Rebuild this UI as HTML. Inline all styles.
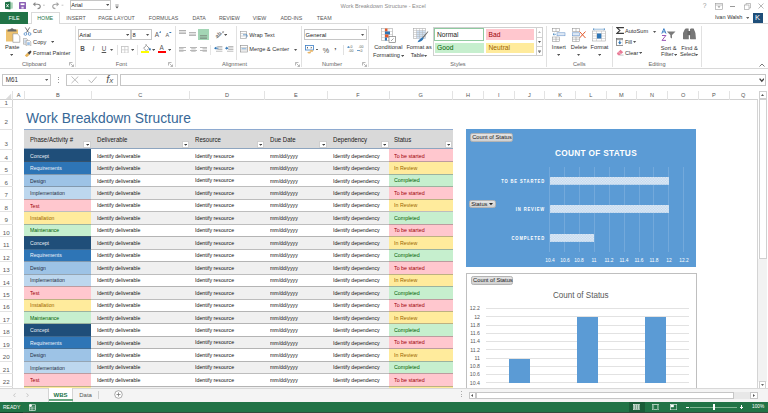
<!DOCTYPE html>
<html><head><meta charset="utf-8"><style>
html,body{margin:0;padding:0;width:768px;height:413px;overflow:hidden;background:#fff;}
body{position:relative;font-family:"Liberation Sans", sans-serif;}
.t{position:absolute;white-space:nowrap;}
.b{position:absolute;box-sizing:border-box;}
</style></head><body>
<div class="b" style="left:0px;top:90.6px;width:757.50px;height:9.70px;background:#fff;border-bottom:1px solid #d2d2d2;"></div><div class="b" style="left:12.1px;top:90.6px;width:1.00px;height:9.20px;background:#e3e3e3;"></div><div class="t" style="left:-181.5px;width:400px;text-align:center;top:91.66px;height:7.28px;line-height:7.28px;font-size:5.6px;color:#555;font-weight:400;">A</div><div class="b" style="left:24.1px;top:90.6px;width:1.00px;height:9.20px;background:#e3e3e3;"></div><div class="t" style="left:-142.1px;width:400px;text-align:center;top:91.66px;height:7.28px;line-height:7.28px;font-size:5.6px;color:#555;font-weight:400;">B</div><div class="b" style="left:90.89999999999999px;top:90.6px;width:1.00px;height:9.20px;background:#e3e3e3;"></div><div class="t" style="left:-59.650000000000006px;width:400px;text-align:center;top:91.66px;height:7.28px;line-height:7.28px;font-size:5.6px;color:#555;font-weight:400;">C</div><div class="b" style="left:189.0px;top:90.6px;width:1.00px;height:9.20px;background:#e3e3e3;"></div><div class="t" style="left:26.94999999999999px;width:400px;text-align:center;top:91.66px;height:7.28px;line-height:7.28px;font-size:5.6px;color:#555;font-weight:400;">D</div><div class="b" style="left:264.1px;top:90.6px;width:1.00px;height:9.20px;background:#e3e3e3;"></div><div class="t" style="left:95.85000000000002px;width:400px;text-align:center;top:91.66px;height:7.28px;line-height:7.28px;font-size:5.6px;color:#555;font-weight:400;">E</div><div class="b" style="left:326.8px;top:90.6px;width:1.00px;height:9.20px;background:#e3e3e3;"></div><div class="t" style="left:158.04999999999995px;width:400px;text-align:center;top:91.66px;height:7.28px;line-height:7.28px;font-size:5.6px;color:#555;font-weight:400;">F</div><div class="b" style="left:388.5px;top:90.6px;width:1.00px;height:9.20px;background:#e3e3e3;"></div><div class="t" style="left:220.75px;width:400px;text-align:center;top:91.66px;height:7.28px;line-height:7.28px;font-size:5.6px;color:#555;font-weight:400;">G</div><div class="b" style="left:452.20000000000005px;top:90.6px;width:1.00px;height:9.20px;background:#e3e3e3;"></div><div class="t" style="left:268.05px;width:400px;text-align:center;top:91.66px;height:7.28px;line-height:7.28px;font-size:5.6px;color:#555;font-weight:400;">H</div><div class="b" style="left:483.1px;top:90.6px;width:1.00px;height:9.20px;background:#e3e3e3;"></div><div class="t" style="left:298.85px;width:400px;text-align:center;top:91.66px;height:7.28px;line-height:7.28px;font-size:5.6px;color:#555;font-weight:400;">I</div><div class="b" style="left:513.8000000000001px;top:90.6px;width:1.00px;height:9.20px;background:#e3e3e3;"></div><div class="t" style="left:329.45000000000005px;width:400px;text-align:center;top:91.66px;height:7.28px;line-height:7.28px;font-size:5.6px;color:#555;font-weight:400;">J</div><div class="b" style="left:544.3000000000001px;top:90.6px;width:1.00px;height:9.20px;background:#e3e3e3;"></div><div class="t" style="left:360.04999999999995px;width:400px;text-align:center;top:91.66px;height:7.28px;line-height:7.28px;font-size:5.6px;color:#555;font-weight:400;">K</div><div class="b" style="left:575.0px;top:90.6px;width:1.00px;height:9.20px;background:#e3e3e3;"></div><div class="t" style="left:390.75px;width:400px;text-align:center;top:91.66px;height:7.28px;line-height:7.28px;font-size:5.6px;color:#555;font-weight:400;">L</div><div class="b" style="left:605.7px;top:90.6px;width:1.00px;height:9.20px;background:#e3e3e3;"></div><div class="t" style="left:421.29999999999995px;width:400px;text-align:center;top:91.66px;height:7.28px;line-height:7.28px;font-size:5.6px;color:#555;font-weight:400;">M</div><div class="b" style="left:636.1px;top:90.6px;width:1.00px;height:9.20px;background:#e3e3e3;"></div><div class="t" style="left:452.04999999999995px;width:400px;text-align:center;top:91.66px;height:7.28px;line-height:7.28px;font-size:5.6px;color:#555;font-weight:400;">N</div><div class="b" style="left:667.2px;top:90.6px;width:1.00px;height:9.20px;background:#e3e3e3;"></div><div class="t" style="left:483.1px;width:400px;text-align:center;top:91.66px;height:7.28px;line-height:7.28px;font-size:5.6px;color:#555;font-weight:400;">O</div><div class="b" style="left:698.2px;top:90.6px;width:1.00px;height:9.20px;background:#e3e3e3;"></div><div class="t" style="left:513.75px;width:400px;text-align:center;top:91.66px;height:7.28px;line-height:7.28px;font-size:5.6px;color:#555;font-weight:400;">P</div><div class="b" style="left:728.5px;top:90.6px;width:1.00px;height:9.20px;background:#e3e3e3;"></div><div class="t" style="left:543.2px;width:400px;text-align:center;top:91.66px;height:7.28px;line-height:7.28px;font-size:5.6px;color:#555;font-weight:400;">Q</div><svg class="b" style="left:2px;top:91px;" width="10" height="9" viewBox="0 0 10 9"><path d="M9.2 2.6 L9.2 8.2 L3.6 8.2 Z" fill="#dcdcdc"/></svg><div class="b" style="left:12.1px;top:99.8px;width:0.90px;height:288.20px;background:#d4d4d4;"></div><div class="b" style="left:0px;top:106.5px;width:12.50px;height:1.00px;background:#e3e3e3;"></div><div class="t" style="left:-193.8px;width:400px;text-align:center;top:99.27px;height:8.06px;line-height:8.06px;font-size:6.2px;color:#5a5a5a;font-weight:400;">1</div><div class="b" style="left:0px;top:128.8px;width:12.50px;height:1.00px;background:#e3e3e3;"></div><div class="t" style="left:-193.8px;width:400px;text-align:center;top:118.07px;height:8.06px;line-height:8.06px;font-size:6.2px;color:#5a5a5a;font-weight:400;">2</div><div class="b" style="left:0px;top:148.7px;width:12.50px;height:1.00px;background:#e3e3e3;"></div><div class="t" style="left:-193.8px;width:400px;text-align:center;top:140.37px;height:8.06px;line-height:8.06px;font-size:6.2px;color:#5a5a5a;font-weight:400;">3</div><div class="b" style="left:0px;top:161px;width:12.50px;height:1.00px;background:#e3e3e3;"></div><div class="t" style="left:-193.8px;width:400px;text-align:center;top:153.93px;height:8.06px;line-height:8.06px;font-size:6.2px;color:#5a5a5a;font-weight:400;">4</div><div class="b" style="left:0px;top:174px;width:12.50px;height:1.00px;background:#e3e3e3;"></div><div class="t" style="left:-193.8px;width:400px;text-align:center;top:166.39px;height:8.06px;line-height:8.06px;font-size:6.2px;color:#5a5a5a;font-weight:400;">5</div><div class="b" style="left:0px;top:186px;width:12.50px;height:1.00px;background:#e3e3e3;"></div><div class="t" style="left:-193.8px;width:400px;text-align:center;top:178.85px;height:8.06px;line-height:8.06px;font-size:6.2px;color:#5a5a5a;font-weight:400;">6</div><div class="b" style="left:0px;top:199px;width:12.50px;height:1.00px;background:#e3e3e3;"></div><div class="t" style="left:-193.8px;width:400px;text-align:center;top:191.31px;height:8.06px;line-height:8.06px;font-size:6.2px;color:#5a5a5a;font-weight:400;">7</div><div class="b" style="left:0px;top:211px;width:12.50px;height:1.00px;background:#e3e3e3;"></div><div class="t" style="left:-193.8px;width:400px;text-align:center;top:203.77px;height:8.06px;line-height:8.06px;font-size:6.2px;color:#5a5a5a;font-weight:400;">8</div><div class="b" style="left:0px;top:224px;width:12.50px;height:1.00px;background:#e3e3e3;"></div><div class="t" style="left:-193.8px;width:400px;text-align:center;top:216.23px;height:8.06px;line-height:8.06px;font-size:6.2px;color:#5a5a5a;font-weight:400;">9</div><div class="b" style="left:0px;top:236px;width:12.50px;height:1.00px;background:#e3e3e3;"></div><div class="t" style="left:-193.8px;width:400px;text-align:center;top:228.69px;height:8.06px;line-height:8.06px;font-size:6.2px;color:#5a5a5a;font-weight:400;">10</div><div class="b" style="left:0px;top:249px;width:12.50px;height:1.00px;background:#e3e3e3;"></div><div class="t" style="left:-193.8px;width:400px;text-align:center;top:241.15px;height:8.06px;line-height:8.06px;font-size:6.2px;color:#5a5a5a;font-weight:400;">11</div><div class="b" style="left:0px;top:261px;width:12.50px;height:1.00px;background:#e3e3e3;"></div><div class="t" style="left:-193.8px;width:400px;text-align:center;top:253.61px;height:8.06px;line-height:8.06px;font-size:6.2px;color:#5a5a5a;font-weight:400;">12</div><div class="b" style="left:0px;top:274px;width:12.50px;height:1.00px;background:#e3e3e3;"></div><div class="t" style="left:-193.8px;width:400px;text-align:center;top:266.07px;height:8.06px;line-height:8.06px;font-size:6.2px;color:#5a5a5a;font-weight:400;">13</div><div class="b" style="left:0px;top:286px;width:12.50px;height:1.00px;background:#e3e3e3;"></div><div class="t" style="left:-193.8px;width:400px;text-align:center;top:278.53px;height:8.06px;line-height:8.06px;font-size:6.2px;color:#5a5a5a;font-weight:400;">14</div><div class="b" style="left:0px;top:299px;width:12.50px;height:1.00px;background:#e3e3e3;"></div><div class="t" style="left:-193.8px;width:400px;text-align:center;top:290.99px;height:8.06px;line-height:8.06px;font-size:6.2px;color:#5a5a5a;font-weight:400;">15</div><div class="b" style="left:0px;top:311px;width:12.50px;height:1.00px;background:#e3e3e3;"></div><div class="t" style="left:-193.8px;width:400px;text-align:center;top:303.45px;height:8.06px;line-height:8.06px;font-size:6.2px;color:#5a5a5a;font-weight:400;">16</div><div class="b" style="left:0px;top:323px;width:12.50px;height:1.00px;background:#e3e3e3;"></div><div class="t" style="left:-193.8px;width:400px;text-align:center;top:315.91px;height:8.06px;line-height:8.06px;font-size:6.2px;color:#5a5a5a;font-weight:400;">17</div><div class="b" style="left:0px;top:336px;width:12.50px;height:1.00px;background:#e3e3e3;"></div><div class="t" style="left:-193.8px;width:400px;text-align:center;top:328.37px;height:8.06px;line-height:8.06px;font-size:6.2px;color:#5a5a5a;font-weight:400;">18</div><div class="b" style="left:0px;top:348px;width:12.50px;height:1.00px;background:#e3e3e3;"></div><div class="t" style="left:-193.8px;width:400px;text-align:center;top:340.83px;height:8.06px;line-height:8.06px;font-size:6.2px;color:#5a5a5a;font-weight:400;">19</div><div class="b" style="left:0px;top:361px;width:12.50px;height:1.00px;background:#e3e3e3;"></div><div class="t" style="left:-193.8px;width:400px;text-align:center;top:353.29px;height:8.06px;line-height:8.06px;font-size:6.2px;color:#5a5a5a;font-weight:400;">20</div><div class="b" style="left:0px;top:373px;width:12.50px;height:1.00px;background:#e3e3e3;"></div><div class="t" style="left:-193.8px;width:400px;text-align:center;top:365.75px;height:8.06px;line-height:8.06px;font-size:6.2px;color:#5a5a5a;font-weight:400;">21</div><div class="b" style="left:0px;top:386px;width:12.50px;height:1.00px;background:#e3e3e3;"></div><div class="t" style="left:-193.8px;width:400px;text-align:center;top:378.21px;height:8.06px;line-height:8.06px;font-size:6.2px;color:#5a5a5a;font-weight:400;">22</div><div class="b" style="left:756.9px;top:99.8px;width:1.00px;height:288.20px;background:#d4d4d4;"></div><div class="t" style="left:26.4px;top:108.94px;height:18.53px;line-height:18.53px;font-size:14.25px;color:#376897;font-weight:400;transform:scaleX(0.97);transform-origin:0 0;">Work Breakdown Structure</div><div class="b" style="left:24.2px;top:129.0px;width:428.40px;height:20.40px;background:#d9d9d9;border-top:1.4px solid #8eaad0;border-bottom:0.9px solid #8ea5bf;"></div><div class="t" style="left:29.8px;top:135.84px;height:8.32px;line-height:8.32px;font-size:6.4px;color:#1a1a1a;font-weight:400;transform:scaleX(0.95);transform-origin:0 50%;">Phase/Activity #</div><div class="b" style="left:83.39999999999999px;top:140.6px;width:7.50px;height:7.90px;background:#fff;border:0.6px solid #cfcfcf;"></div><svg class="b" style="left:85.64999999999999px;top:143.9px;" width="3.2" height="1.8" viewBox="0 0 3.2 1.8"><path d="M0 0 L3.2 0 L1.6 1.8 Z" fill="#444"/></svg><div class="t" style="left:96.6px;top:135.84px;height:8.32px;line-height:8.32px;font-size:6.4px;color:#1a1a1a;font-weight:400;transform:scaleX(0.95);transform-origin:0 50%;">Deliverable</div><div class="b" style="left:181.5px;top:140.6px;width:7.50px;height:7.90px;background:#fff;border:0.6px solid #cfcfcf;"></div><svg class="b" style="left:183.75px;top:143.9px;" width="3.2" height="1.8" viewBox="0 0 3.2 1.8"><path d="M0 0 L3.2 0 L1.6 1.8 Z" fill="#444"/></svg><div class="t" style="left:194.70000000000002px;top:135.84px;height:8.32px;line-height:8.32px;font-size:6.4px;color:#1a1a1a;font-weight:400;transform:scaleX(0.95);transform-origin:0 50%;">Resource</div><div class="b" style="left:256.6px;top:140.6px;width:7.50px;height:7.90px;background:#fff;border:0.6px solid #cfcfcf;"></div><svg class="b" style="left:258.85px;top:143.9px;" width="3.2" height="1.8" viewBox="0 0 3.2 1.8"><path d="M0 0 L3.2 0 L1.6 1.8 Z" fill="#444"/></svg><div class="t" style="left:269.8px;top:135.84px;height:8.32px;line-height:8.32px;font-size:6.4px;color:#1a1a1a;font-weight:400;transform:scaleX(0.95);transform-origin:0 50%;">Due Date</div><div class="b" style="left:319.3px;top:140.6px;width:7.50px;height:7.90px;background:#fff;border:0.6px solid #cfcfcf;"></div><svg class="b" style="left:321.55px;top:143.9px;" width="3.2" height="1.8" viewBox="0 0 3.2 1.8"><path d="M0 0 L3.2 0 L1.6 1.8 Z" fill="#444"/></svg><div class="t" style="left:332.5px;top:135.84px;height:8.32px;line-height:8.32px;font-size:6.4px;color:#1a1a1a;font-weight:400;transform:scaleX(0.95);transform-origin:0 50%;">Dependency</div><div class="b" style="left:381.0px;top:140.6px;width:7.50px;height:7.90px;background:#fff;border:0.6px solid #cfcfcf;"></div><svg class="b" style="left:383.25px;top:143.9px;" width="3.2" height="1.8" viewBox="0 0 3.2 1.8"><path d="M0 0 L3.2 0 L1.6 1.8 Z" fill="#444"/></svg><div class="t" style="left:394.2px;top:135.84px;height:8.32px;line-height:8.32px;font-size:6.4px;color:#1a1a1a;font-weight:400;transform:scaleX(0.95);transform-origin:0 50%;">Status</div><div class="b" style="left:444.70000000000005px;top:140.6px;width:7.50px;height:7.90px;background:#fff;border:0.6px solid #cfcfcf;"></div><svg class="b" style="left:446.95000000000005px;top:143.9px;" width="3.2" height="1.8" viewBox="0 0 3.2 1.8"><path d="M0 0 L3.2 0 L1.6 1.8 Z" fill="#444"/></svg><div class="b" style="left:91.3px;top:149.2px;width:297.60px;height:12.46px;background:#fff;"></div><div class="b" style="left:24.2px;top:149.2px;width:67.10px;height:12.46px;background:#1f4e79;"></div><div class="b" style="left:388.9px;top:149.2px;width:63.70px;height:12.46px;background:#ffc7ce;"></div><div class="t" style="left:29.9px;top:152.68px;height:7.29px;line-height:7.29px;font-size:5.61px;color:#e8eef5;font-weight:400;transform:scaleX(0.9091);transform-origin:0 50%;">Concept</div><div class="t" style="left:97.1px;top:152.61px;height:7.44px;line-height:7.44px;font-size:5.720000000000001px;color:#111;font-weight:400;transform:scaleX(0.9091);transform-origin:0 50%;">Identify deliverable</div><div class="t" style="left:194.9px;top:152.54px;height:7.58px;line-height:7.58px;font-size:5.83px;color:#111;font-weight:400;transform:scaleX(0.9091);transform-origin:0 50%;">Identify resource</div><div class="t" style="left:269.8px;top:152.61px;height:7.44px;line-height:7.44px;font-size:5.720000000000001px;color:#111;font-weight:400;transform:scaleX(0.9091);transform-origin:0 50%;">mm/dd/yyyy</div><div class="t" style="left:333.1px;top:152.60px;height:7.46px;line-height:7.46px;font-size:5.742px;color:#111;font-weight:400;transform:scaleX(0.9091);transform-origin:0 50%;">Identify dependency</div><div class="t" style="left:394.4px;top:152.54px;height:7.58px;line-height:7.58px;font-size:5.83px;color:#9c0006;font-weight:400;transform:scaleX(0.9091);transform-origin:0 50%;">To be started</div><div class="b" style="left:91.3px;top:161.66px;width:297.60px;height:12.46px;background:#f0f0f0;"></div><div class="b" style="left:24.2px;top:161.66px;width:67.10px;height:12.46px;background:#2e75b6;"></div><div class="b" style="left:388.9px;top:161.66px;width:63.70px;height:12.46px;background:#ffeb9c;"></div><div class="t" style="left:29.9px;top:165.14px;height:7.29px;line-height:7.29px;font-size:5.61px;color:#eef4fa;font-weight:400;transform:scaleX(0.9091);transform-origin:0 50%;">Requirements</div><div class="t" style="left:97.1px;top:165.07px;height:7.44px;line-height:7.44px;font-size:5.720000000000001px;color:#111;font-weight:400;transform:scaleX(0.9091);transform-origin:0 50%;">Identify deliverable</div><div class="t" style="left:194.9px;top:165.00px;height:7.58px;line-height:7.58px;font-size:5.83px;color:#111;font-weight:400;transform:scaleX(0.9091);transform-origin:0 50%;">Identify resource</div><div class="t" style="left:269.8px;top:165.07px;height:7.44px;line-height:7.44px;font-size:5.720000000000001px;color:#111;font-weight:400;transform:scaleX(0.9091);transform-origin:0 50%;">mm/dd/yyyy</div><div class="t" style="left:333.1px;top:165.06px;height:7.46px;line-height:7.46px;font-size:5.742px;color:#111;font-weight:400;transform:scaleX(0.9091);transform-origin:0 50%;">Identify dependency</div><div class="t" style="left:394.4px;top:165.00px;height:7.58px;line-height:7.58px;font-size:5.83px;color:#9c6500;font-weight:400;transform:scaleX(0.9091);transform-origin:0 50%;">In Review</div><div class="b" style="left:91.3px;top:174.12px;width:297.60px;height:12.46px;background:#fff;"></div><div class="b" style="left:24.2px;top:174.12px;width:67.10px;height:12.46px;background:#9dc3e6;"></div><div class="b" style="left:388.9px;top:174.12px;width:63.70px;height:12.46px;background:#c6efce;"></div><div class="t" style="left:29.9px;top:177.60px;height:7.29px;line-height:7.29px;font-size:5.61px;color:#1f2f3f;font-weight:400;transform:scaleX(0.9091);transform-origin:0 50%;">Design</div><div class="t" style="left:97.1px;top:177.53px;height:7.44px;line-height:7.44px;font-size:5.720000000000001px;color:#111;font-weight:400;transform:scaleX(0.9091);transform-origin:0 50%;">Identify deliverable</div><div class="t" style="left:194.9px;top:177.46px;height:7.58px;line-height:7.58px;font-size:5.83px;color:#111;font-weight:400;transform:scaleX(0.9091);transform-origin:0 50%;">Identify resource</div><div class="t" style="left:269.8px;top:177.53px;height:7.44px;line-height:7.44px;font-size:5.720000000000001px;color:#111;font-weight:400;transform:scaleX(0.9091);transform-origin:0 50%;">mm/dd/yyyy</div><div class="t" style="left:333.1px;top:177.52px;height:7.46px;line-height:7.46px;font-size:5.742px;color:#111;font-weight:400;transform:scaleX(0.9091);transform-origin:0 50%;">Identify dependency</div><div class="t" style="left:394.4px;top:177.46px;height:7.58px;line-height:7.58px;font-size:5.83px;color:#006100;font-weight:400;transform:scaleX(0.9091);transform-origin:0 50%;">Completed</div><div class="b" style="left:91.3px;top:186.57999999999998px;width:297.60px;height:12.46px;background:#f0f0f0;"></div><div class="b" style="left:24.2px;top:186.57999999999998px;width:67.10px;height:12.46px;background:#bdd7ee;"></div><div class="b" style="left:388.9px;top:186.57999999999998px;width:63.70px;height:12.46px;background:#ffc7ce;"></div><div class="t" style="left:29.9px;top:190.06px;height:7.29px;line-height:7.29px;font-size:5.61px;color:#1f2f3f;font-weight:400;transform:scaleX(0.9091);transform-origin:0 50%;">Implementation</div><div class="t" style="left:97.1px;top:189.99px;height:7.44px;line-height:7.44px;font-size:5.720000000000001px;color:#111;font-weight:400;transform:scaleX(0.9091);transform-origin:0 50%;">Identify deliverable</div><div class="t" style="left:194.9px;top:189.92px;height:7.58px;line-height:7.58px;font-size:5.83px;color:#111;font-weight:400;transform:scaleX(0.9091);transform-origin:0 50%;">Identify resource</div><div class="t" style="left:269.8px;top:189.99px;height:7.44px;line-height:7.44px;font-size:5.720000000000001px;color:#111;font-weight:400;transform:scaleX(0.9091);transform-origin:0 50%;">mm/dd/yyyy</div><div class="t" style="left:333.1px;top:189.98px;height:7.46px;line-height:7.46px;font-size:5.742px;color:#111;font-weight:400;transform:scaleX(0.9091);transform-origin:0 50%;">Identify dependency</div><div class="t" style="left:394.4px;top:189.92px;height:7.58px;line-height:7.58px;font-size:5.83px;color:#9c0006;font-weight:400;transform:scaleX(0.9091);transform-origin:0 50%;">To be started</div><div class="b" style="left:91.3px;top:199.04px;width:297.60px;height:12.46px;background:#fff;"></div><div class="b" style="left:24.2px;top:199.04px;width:67.10px;height:12.46px;background:#ffc7ce;"></div><div class="b" style="left:388.9px;top:199.04px;width:63.70px;height:12.46px;background:#ffeb9c;"></div><div class="t" style="left:29.9px;top:202.52px;height:7.29px;line-height:7.29px;font-size:5.61px;color:#9c0006;font-weight:400;transform:scaleX(0.9091);transform-origin:0 50%;">Test</div><div class="t" style="left:97.1px;top:202.45px;height:7.44px;line-height:7.44px;font-size:5.720000000000001px;color:#111;font-weight:400;transform:scaleX(0.9091);transform-origin:0 50%;">Identify deliverable</div><div class="t" style="left:194.9px;top:202.38px;height:7.58px;line-height:7.58px;font-size:5.83px;color:#111;font-weight:400;transform:scaleX(0.9091);transform-origin:0 50%;">Identify resource</div><div class="t" style="left:269.8px;top:202.45px;height:7.44px;line-height:7.44px;font-size:5.720000000000001px;color:#111;font-weight:400;transform:scaleX(0.9091);transform-origin:0 50%;">mm/dd/yyyy</div><div class="t" style="left:333.1px;top:202.44px;height:7.46px;line-height:7.46px;font-size:5.742px;color:#111;font-weight:400;transform:scaleX(0.9091);transform-origin:0 50%;">Identify dependency</div><div class="t" style="left:394.4px;top:202.38px;height:7.58px;line-height:7.58px;font-size:5.83px;color:#9c6500;font-weight:400;transform:scaleX(0.9091);transform-origin:0 50%;">In Review</div><div class="b" style="left:91.3px;top:211.5px;width:297.60px;height:12.46px;background:#f0f0f0;"></div><div class="b" style="left:24.2px;top:211.5px;width:67.10px;height:12.46px;background:#ffeb9c;"></div><div class="b" style="left:388.9px;top:211.5px;width:63.70px;height:12.46px;background:#c6efce;"></div><div class="t" style="left:29.9px;top:214.98px;height:7.29px;line-height:7.29px;font-size:5.61px;color:#9c6500;font-weight:400;transform:scaleX(0.9091);transform-origin:0 50%;">Installation</div><div class="t" style="left:97.1px;top:214.91px;height:7.44px;line-height:7.44px;font-size:5.720000000000001px;color:#111;font-weight:400;transform:scaleX(0.9091);transform-origin:0 50%;">Identify deliverable</div><div class="t" style="left:194.9px;top:214.84px;height:7.58px;line-height:7.58px;font-size:5.83px;color:#111;font-weight:400;transform:scaleX(0.9091);transform-origin:0 50%;">Identify resource</div><div class="t" style="left:269.8px;top:214.91px;height:7.44px;line-height:7.44px;font-size:5.720000000000001px;color:#111;font-weight:400;transform:scaleX(0.9091);transform-origin:0 50%;">mm/dd/yyyy</div><div class="t" style="left:333.1px;top:214.90px;height:7.46px;line-height:7.46px;font-size:5.742px;color:#111;font-weight:400;transform:scaleX(0.9091);transform-origin:0 50%;">Identify dependency</div><div class="t" style="left:394.4px;top:214.84px;height:7.58px;line-height:7.58px;font-size:5.83px;color:#006100;font-weight:400;transform:scaleX(0.9091);transform-origin:0 50%;">Completed</div><div class="b" style="left:91.3px;top:223.95999999999998px;width:297.60px;height:12.46px;background:#fff;"></div><div class="b" style="left:24.2px;top:223.95999999999998px;width:67.10px;height:12.46px;background:#c6efce;"></div><div class="b" style="left:388.9px;top:223.95999999999998px;width:63.70px;height:12.46px;background:#ffc7ce;"></div><div class="t" style="left:29.9px;top:227.44px;height:7.29px;line-height:7.29px;font-size:5.61px;color:#006100;font-weight:400;transform:scaleX(0.9091);transform-origin:0 50%;">Maintenance</div><div class="t" style="left:97.1px;top:227.37px;height:7.44px;line-height:7.44px;font-size:5.720000000000001px;color:#111;font-weight:400;transform:scaleX(0.9091);transform-origin:0 50%;">Identify deliverable</div><div class="t" style="left:194.9px;top:227.30px;height:7.58px;line-height:7.58px;font-size:5.83px;color:#111;font-weight:400;transform:scaleX(0.9091);transform-origin:0 50%;">Identify resource</div><div class="t" style="left:269.8px;top:227.37px;height:7.44px;line-height:7.44px;font-size:5.720000000000001px;color:#111;font-weight:400;transform:scaleX(0.9091);transform-origin:0 50%;">mm/dd/yyyy</div><div class="t" style="left:333.1px;top:227.36px;height:7.46px;line-height:7.46px;font-size:5.742px;color:#111;font-weight:400;transform:scaleX(0.9091);transform-origin:0 50%;">Identify dependency</div><div class="t" style="left:394.4px;top:227.30px;height:7.58px;line-height:7.58px;font-size:5.83px;color:#9c0006;font-weight:400;transform:scaleX(0.9091);transform-origin:0 50%;">To be started</div><div class="b" style="left:91.3px;top:236.42px;width:297.60px;height:12.46px;background:#f0f0f0;"></div><div class="b" style="left:24.2px;top:236.42px;width:67.10px;height:12.46px;background:#1f4e79;"></div><div class="b" style="left:388.9px;top:236.42px;width:63.70px;height:12.46px;background:#ffeb9c;"></div><div class="t" style="left:29.9px;top:239.90px;height:7.29px;line-height:7.29px;font-size:5.61px;color:#e8eef5;font-weight:400;transform:scaleX(0.9091);transform-origin:0 50%;">Concept</div><div class="t" style="left:97.1px;top:239.83px;height:7.44px;line-height:7.44px;font-size:5.720000000000001px;color:#111;font-weight:400;transform:scaleX(0.9091);transform-origin:0 50%;">Identify deliverable</div><div class="t" style="left:194.9px;top:239.76px;height:7.58px;line-height:7.58px;font-size:5.83px;color:#111;font-weight:400;transform:scaleX(0.9091);transform-origin:0 50%;">Identify resource</div><div class="t" style="left:269.8px;top:239.83px;height:7.44px;line-height:7.44px;font-size:5.720000000000001px;color:#111;font-weight:400;transform:scaleX(0.9091);transform-origin:0 50%;">mm/dd/yyyy</div><div class="t" style="left:333.1px;top:239.82px;height:7.46px;line-height:7.46px;font-size:5.742px;color:#111;font-weight:400;transform:scaleX(0.9091);transform-origin:0 50%;">Identify dependency</div><div class="t" style="left:394.4px;top:239.76px;height:7.58px;line-height:7.58px;font-size:5.83px;color:#9c6500;font-weight:400;transform:scaleX(0.9091);transform-origin:0 50%;">In Review</div><div class="b" style="left:91.3px;top:248.88px;width:297.60px;height:12.46px;background:#fff;"></div><div class="b" style="left:24.2px;top:248.88px;width:67.10px;height:12.46px;background:#2e75b6;"></div><div class="b" style="left:388.9px;top:248.88px;width:63.70px;height:12.46px;background:#c6efce;"></div><div class="t" style="left:29.9px;top:252.36px;height:7.29px;line-height:7.29px;font-size:5.61px;color:#eef4fa;font-weight:400;transform:scaleX(0.9091);transform-origin:0 50%;">Requirements</div><div class="t" style="left:97.1px;top:252.29px;height:7.44px;line-height:7.44px;font-size:5.720000000000001px;color:#111;font-weight:400;transform:scaleX(0.9091);transform-origin:0 50%;">Identify deliverable</div><div class="t" style="left:194.9px;top:252.22px;height:7.58px;line-height:7.58px;font-size:5.83px;color:#111;font-weight:400;transform:scaleX(0.9091);transform-origin:0 50%;">Identify resource</div><div class="t" style="left:269.8px;top:252.29px;height:7.44px;line-height:7.44px;font-size:5.720000000000001px;color:#111;font-weight:400;transform:scaleX(0.9091);transform-origin:0 50%;">mm/dd/yyyy</div><div class="t" style="left:333.1px;top:252.28px;height:7.46px;line-height:7.46px;font-size:5.742px;color:#111;font-weight:400;transform:scaleX(0.9091);transform-origin:0 50%;">Identify dependency</div><div class="t" style="left:394.4px;top:252.22px;height:7.58px;line-height:7.58px;font-size:5.83px;color:#006100;font-weight:400;transform:scaleX(0.9091);transform-origin:0 50%;">Completed</div><div class="b" style="left:91.3px;top:261.34000000000003px;width:297.60px;height:12.46px;background:#f0f0f0;"></div><div class="b" style="left:24.2px;top:261.34000000000003px;width:67.10px;height:12.46px;background:#9dc3e6;"></div><div class="b" style="left:388.9px;top:261.34000000000003px;width:63.70px;height:12.46px;background:#ffc7ce;"></div><div class="t" style="left:29.9px;top:264.82px;height:7.29px;line-height:7.29px;font-size:5.61px;color:#1f2f3f;font-weight:400;transform:scaleX(0.9091);transform-origin:0 50%;">Design</div><div class="t" style="left:97.1px;top:264.75px;height:7.44px;line-height:7.44px;font-size:5.720000000000001px;color:#111;font-weight:400;transform:scaleX(0.9091);transform-origin:0 50%;">Identify deliverable</div><div class="t" style="left:194.9px;top:264.68px;height:7.58px;line-height:7.58px;font-size:5.83px;color:#111;font-weight:400;transform:scaleX(0.9091);transform-origin:0 50%;">Identify resource</div><div class="t" style="left:269.8px;top:264.75px;height:7.44px;line-height:7.44px;font-size:5.720000000000001px;color:#111;font-weight:400;transform:scaleX(0.9091);transform-origin:0 50%;">mm/dd/yyyy</div><div class="t" style="left:333.1px;top:264.74px;height:7.46px;line-height:7.46px;font-size:5.742px;color:#111;font-weight:400;transform:scaleX(0.9091);transform-origin:0 50%;">Identify dependency</div><div class="t" style="left:394.4px;top:264.68px;height:7.58px;line-height:7.58px;font-size:5.83px;color:#9c0006;font-weight:400;transform:scaleX(0.9091);transform-origin:0 50%;">To be started</div><div class="b" style="left:91.3px;top:273.8px;width:297.60px;height:12.46px;background:#fff;"></div><div class="b" style="left:24.2px;top:273.8px;width:67.10px;height:12.46px;background:#bdd7ee;"></div><div class="b" style="left:388.9px;top:273.8px;width:63.70px;height:12.46px;background:#ffeb9c;"></div><div class="t" style="left:29.9px;top:277.28px;height:7.29px;line-height:7.29px;font-size:5.61px;color:#1f2f3f;font-weight:400;transform:scaleX(0.9091);transform-origin:0 50%;">Implementation</div><div class="t" style="left:97.1px;top:277.21px;height:7.44px;line-height:7.44px;font-size:5.720000000000001px;color:#111;font-weight:400;transform:scaleX(0.9091);transform-origin:0 50%;">Identify deliverable</div><div class="t" style="left:194.9px;top:277.14px;height:7.58px;line-height:7.58px;font-size:5.83px;color:#111;font-weight:400;transform:scaleX(0.9091);transform-origin:0 50%;">Identify resource</div><div class="t" style="left:269.8px;top:277.21px;height:7.44px;line-height:7.44px;font-size:5.720000000000001px;color:#111;font-weight:400;transform:scaleX(0.9091);transform-origin:0 50%;">mm/dd/yyyy</div><div class="t" style="left:333.1px;top:277.20px;height:7.46px;line-height:7.46px;font-size:5.742px;color:#111;font-weight:400;transform:scaleX(0.9091);transform-origin:0 50%;">Identify dependency</div><div class="t" style="left:394.4px;top:277.14px;height:7.58px;line-height:7.58px;font-size:5.83px;color:#9c6500;font-weight:400;transform:scaleX(0.9091);transform-origin:0 50%;">In Review</div><div class="b" style="left:91.3px;top:286.26px;width:297.60px;height:12.46px;background:#f0f0f0;"></div><div class="b" style="left:24.2px;top:286.26px;width:67.10px;height:12.46px;background:#ffc7ce;"></div><div class="b" style="left:388.9px;top:286.26px;width:63.70px;height:12.46px;background:#c6efce;"></div><div class="t" style="left:29.9px;top:289.74px;height:7.29px;line-height:7.29px;font-size:5.61px;color:#9c0006;font-weight:400;transform:scaleX(0.9091);transform-origin:0 50%;">Test</div><div class="t" style="left:97.1px;top:289.67px;height:7.44px;line-height:7.44px;font-size:5.720000000000001px;color:#111;font-weight:400;transform:scaleX(0.9091);transform-origin:0 50%;">Identify deliverable</div><div class="t" style="left:194.9px;top:289.60px;height:7.58px;line-height:7.58px;font-size:5.83px;color:#111;font-weight:400;transform:scaleX(0.9091);transform-origin:0 50%;">Identify resource</div><div class="t" style="left:269.8px;top:289.67px;height:7.44px;line-height:7.44px;font-size:5.720000000000001px;color:#111;font-weight:400;transform:scaleX(0.9091);transform-origin:0 50%;">mm/dd/yyyy</div><div class="t" style="left:333.1px;top:289.66px;height:7.46px;line-height:7.46px;font-size:5.742px;color:#111;font-weight:400;transform:scaleX(0.9091);transform-origin:0 50%;">Identify dependency</div><div class="t" style="left:394.4px;top:289.60px;height:7.58px;line-height:7.58px;font-size:5.83px;color:#006100;font-weight:400;transform:scaleX(0.9091);transform-origin:0 50%;">Completed</div><div class="b" style="left:91.3px;top:298.72px;width:297.60px;height:12.46px;background:#fff;"></div><div class="b" style="left:24.2px;top:298.72px;width:67.10px;height:12.46px;background:#ffeb9c;"></div><div class="b" style="left:388.9px;top:298.72px;width:63.70px;height:12.46px;background:#ffc7ce;"></div><div class="t" style="left:29.9px;top:302.20px;height:7.29px;line-height:7.29px;font-size:5.61px;color:#9c6500;font-weight:400;transform:scaleX(0.9091);transform-origin:0 50%;">Installation</div><div class="t" style="left:97.1px;top:302.13px;height:7.44px;line-height:7.44px;font-size:5.720000000000001px;color:#111;font-weight:400;transform:scaleX(0.9091);transform-origin:0 50%;">Identify deliverable</div><div class="t" style="left:194.9px;top:302.06px;height:7.58px;line-height:7.58px;font-size:5.83px;color:#111;font-weight:400;transform:scaleX(0.9091);transform-origin:0 50%;">Identify resource</div><div class="t" style="left:269.8px;top:302.13px;height:7.44px;line-height:7.44px;font-size:5.720000000000001px;color:#111;font-weight:400;transform:scaleX(0.9091);transform-origin:0 50%;">mm/dd/yyyy</div><div class="t" style="left:333.1px;top:302.12px;height:7.46px;line-height:7.46px;font-size:5.742px;color:#111;font-weight:400;transform:scaleX(0.9091);transform-origin:0 50%;">Identify dependency</div><div class="t" style="left:394.4px;top:302.06px;height:7.58px;line-height:7.58px;font-size:5.83px;color:#9c0006;font-weight:400;transform:scaleX(0.9091);transform-origin:0 50%;">To be started</div><div class="b" style="left:91.3px;top:311.18px;width:297.60px;height:12.46px;background:#f0f0f0;"></div><div class="b" style="left:24.2px;top:311.18px;width:67.10px;height:12.46px;background:#c6efce;"></div><div class="b" style="left:388.9px;top:311.18px;width:63.70px;height:12.46px;background:#ffeb9c;"></div><div class="t" style="left:29.9px;top:314.66px;height:7.29px;line-height:7.29px;font-size:5.61px;color:#006100;font-weight:400;transform:scaleX(0.9091);transform-origin:0 50%;">Maintenance</div><div class="t" style="left:97.1px;top:314.59px;height:7.44px;line-height:7.44px;font-size:5.720000000000001px;color:#111;font-weight:400;transform:scaleX(0.9091);transform-origin:0 50%;">Identify deliverable</div><div class="t" style="left:194.9px;top:314.52px;height:7.58px;line-height:7.58px;font-size:5.83px;color:#111;font-weight:400;transform:scaleX(0.9091);transform-origin:0 50%;">Identify resource</div><div class="t" style="left:269.8px;top:314.59px;height:7.44px;line-height:7.44px;font-size:5.720000000000001px;color:#111;font-weight:400;transform:scaleX(0.9091);transform-origin:0 50%;">mm/dd/yyyy</div><div class="t" style="left:333.1px;top:314.58px;height:7.46px;line-height:7.46px;font-size:5.742px;color:#111;font-weight:400;transform:scaleX(0.9091);transform-origin:0 50%;">Identify dependency</div><div class="t" style="left:394.4px;top:314.52px;height:7.58px;line-height:7.58px;font-size:5.83px;color:#9c6500;font-weight:400;transform:scaleX(0.9091);transform-origin:0 50%;">In Review</div><div class="b" style="left:91.3px;top:323.64px;width:297.60px;height:12.46px;background:#fff;"></div><div class="b" style="left:24.2px;top:323.64px;width:67.10px;height:12.46px;background:#1f4e79;"></div><div class="b" style="left:388.9px;top:323.64px;width:63.70px;height:12.46px;background:#c6efce;"></div><div class="t" style="left:29.9px;top:327.12px;height:7.29px;line-height:7.29px;font-size:5.61px;color:#e8eef5;font-weight:400;transform:scaleX(0.9091);transform-origin:0 50%;">Concept</div><div class="t" style="left:97.1px;top:327.05px;height:7.44px;line-height:7.44px;font-size:5.720000000000001px;color:#111;font-weight:400;transform:scaleX(0.9091);transform-origin:0 50%;">Identify deliverable</div><div class="t" style="left:194.9px;top:326.98px;height:7.58px;line-height:7.58px;font-size:5.83px;color:#111;font-weight:400;transform:scaleX(0.9091);transform-origin:0 50%;">Identify resource</div><div class="t" style="left:269.8px;top:327.05px;height:7.44px;line-height:7.44px;font-size:5.720000000000001px;color:#111;font-weight:400;transform:scaleX(0.9091);transform-origin:0 50%;">mm/dd/yyyy</div><div class="t" style="left:333.1px;top:327.04px;height:7.46px;line-height:7.46px;font-size:5.742px;color:#111;font-weight:400;transform:scaleX(0.9091);transform-origin:0 50%;">Identify dependency</div><div class="t" style="left:394.4px;top:326.98px;height:7.58px;line-height:7.58px;font-size:5.83px;color:#006100;font-weight:400;transform:scaleX(0.9091);transform-origin:0 50%;">Completed</div><div class="b" style="left:91.3px;top:336.1px;width:297.60px;height:12.46px;background:#f0f0f0;"></div><div class="b" style="left:24.2px;top:336.1px;width:67.10px;height:12.46px;background:#2e75b6;"></div><div class="b" style="left:388.9px;top:336.1px;width:63.70px;height:12.46px;background:#ffc7ce;"></div><div class="t" style="left:29.9px;top:339.58px;height:7.29px;line-height:7.29px;font-size:5.61px;color:#eef4fa;font-weight:400;transform:scaleX(0.9091);transform-origin:0 50%;">Requirements</div><div class="t" style="left:97.1px;top:339.51px;height:7.44px;line-height:7.44px;font-size:5.720000000000001px;color:#111;font-weight:400;transform:scaleX(0.9091);transform-origin:0 50%;">Identify deliverable</div><div class="t" style="left:194.9px;top:339.44px;height:7.58px;line-height:7.58px;font-size:5.83px;color:#111;font-weight:400;transform:scaleX(0.9091);transform-origin:0 50%;">Identify resource</div><div class="t" style="left:269.8px;top:339.51px;height:7.44px;line-height:7.44px;font-size:5.720000000000001px;color:#111;font-weight:400;transform:scaleX(0.9091);transform-origin:0 50%;">mm/dd/yyyy</div><div class="t" style="left:333.1px;top:339.50px;height:7.46px;line-height:7.46px;font-size:5.742px;color:#111;font-weight:400;transform:scaleX(0.9091);transform-origin:0 50%;">Identify dependency</div><div class="t" style="left:394.4px;top:339.44px;height:7.58px;line-height:7.58px;font-size:5.83px;color:#9c0006;font-weight:400;transform:scaleX(0.9091);transform-origin:0 50%;">To be started</div><div class="b" style="left:91.3px;top:348.56px;width:297.60px;height:12.46px;background:#fff;"></div><div class="b" style="left:24.2px;top:348.56px;width:67.10px;height:12.46px;background:#9dc3e6;"></div><div class="b" style="left:388.9px;top:348.56px;width:63.70px;height:12.46px;background:#ffeb9c;"></div><div class="t" style="left:29.9px;top:352.04px;height:7.29px;line-height:7.29px;font-size:5.61px;color:#1f2f3f;font-weight:400;transform:scaleX(0.9091);transform-origin:0 50%;">Design</div><div class="t" style="left:97.1px;top:351.97px;height:7.44px;line-height:7.44px;font-size:5.720000000000001px;color:#111;font-weight:400;transform:scaleX(0.9091);transform-origin:0 50%;">Identify deliverable</div><div class="t" style="left:194.9px;top:351.90px;height:7.58px;line-height:7.58px;font-size:5.83px;color:#111;font-weight:400;transform:scaleX(0.9091);transform-origin:0 50%;">Identify resource</div><div class="t" style="left:269.8px;top:351.97px;height:7.44px;line-height:7.44px;font-size:5.720000000000001px;color:#111;font-weight:400;transform:scaleX(0.9091);transform-origin:0 50%;">mm/dd/yyyy</div><div class="t" style="left:333.1px;top:351.96px;height:7.46px;line-height:7.46px;font-size:5.742px;color:#111;font-weight:400;transform:scaleX(0.9091);transform-origin:0 50%;">Identify dependency</div><div class="t" style="left:394.4px;top:351.90px;height:7.58px;line-height:7.58px;font-size:5.83px;color:#9c6500;font-weight:400;transform:scaleX(0.9091);transform-origin:0 50%;">In Review</div><div class="b" style="left:91.3px;top:361.02px;width:297.60px;height:12.46px;background:#f0f0f0;"></div><div class="b" style="left:24.2px;top:361.02px;width:67.10px;height:12.46px;background:#bdd7ee;"></div><div class="b" style="left:388.9px;top:361.02px;width:63.70px;height:12.46px;background:#c6efce;"></div><div class="t" style="left:29.9px;top:364.50px;height:7.29px;line-height:7.29px;font-size:5.61px;color:#1f2f3f;font-weight:400;transform:scaleX(0.9091);transform-origin:0 50%;">Implementation</div><div class="t" style="left:97.1px;top:364.43px;height:7.44px;line-height:7.44px;font-size:5.720000000000001px;color:#111;font-weight:400;transform:scaleX(0.9091);transform-origin:0 50%;">Identify deliverable</div><div class="t" style="left:194.9px;top:364.36px;height:7.58px;line-height:7.58px;font-size:5.83px;color:#111;font-weight:400;transform:scaleX(0.9091);transform-origin:0 50%;">Identify resource</div><div class="t" style="left:269.8px;top:364.43px;height:7.44px;line-height:7.44px;font-size:5.720000000000001px;color:#111;font-weight:400;transform:scaleX(0.9091);transform-origin:0 50%;">mm/dd/yyyy</div><div class="t" style="left:333.1px;top:364.42px;height:7.46px;line-height:7.46px;font-size:5.742px;color:#111;font-weight:400;transform:scaleX(0.9091);transform-origin:0 50%;">Identify dependency</div><div class="t" style="left:394.4px;top:364.36px;height:7.58px;line-height:7.58px;font-size:5.83px;color:#006100;font-weight:400;transform:scaleX(0.9091);transform-origin:0 50%;">Completed</div><div class="b" style="left:91.3px;top:373.48px;width:297.60px;height:12.46px;background:#fff;"></div><div class="b" style="left:24.2px;top:373.48px;width:67.10px;height:12.46px;background:#ffc7ce;"></div><div class="b" style="left:388.9px;top:373.48px;width:63.70px;height:12.46px;background:#ffc7ce;"></div><div class="t" style="left:29.9px;top:376.96px;height:7.29px;line-height:7.29px;font-size:5.61px;color:#9c0006;font-weight:400;transform:scaleX(0.9091);transform-origin:0 50%;">Test</div><div class="t" style="left:97.1px;top:376.89px;height:7.44px;line-height:7.44px;font-size:5.720000000000001px;color:#111;font-weight:400;transform:scaleX(0.9091);transform-origin:0 50%;">Identify deliverable</div><div class="t" style="left:194.9px;top:376.82px;height:7.58px;line-height:7.58px;font-size:5.83px;color:#111;font-weight:400;transform:scaleX(0.9091);transform-origin:0 50%;">Identify resource</div><div class="t" style="left:269.8px;top:376.89px;height:7.44px;line-height:7.44px;font-size:5.720000000000001px;color:#111;font-weight:400;transform:scaleX(0.9091);transform-origin:0 50%;">mm/dd/yyyy</div><div class="t" style="left:333.1px;top:376.88px;height:7.46px;line-height:7.46px;font-size:5.742px;color:#111;font-weight:400;transform:scaleX(0.9091);transform-origin:0 50%;">Identify dependency</div><div class="t" style="left:394.4px;top:376.82px;height:7.58px;line-height:7.58px;font-size:5.83px;color:#9c0006;font-weight:400;transform:scaleX(0.9091);transform-origin:0 50%;">To be started</div><div class="b" style="left:91.3px;top:385.94px;width:297.60px;height:2.06px;background:#f0f0f0;"></div><div class="b" style="left:24.2px;top:385.94px;width:67.10px;height:2.06px;background:#ffeb9c;"></div><div class="b" style="left:388.9px;top:385.94px;width:63.70px;height:2.06px;background:#ffeb9c;"></div><div class="b" style="left:24.2px;top:161px;width:428.40px;height:1.00px;background:rgba(90,90,90,0.40);"></div><div class="b" style="left:24.2px;top:174px;width:428.40px;height:1.00px;background:rgba(90,90,90,0.40);"></div><div class="b" style="left:24.2px;top:186px;width:428.40px;height:1.00px;background:rgba(90,90,90,0.40);"></div><div class="b" style="left:24.2px;top:199px;width:428.40px;height:1.00px;background:rgba(90,90,90,0.40);"></div><div class="b" style="left:24.2px;top:211px;width:428.40px;height:1.00px;background:rgba(90,90,90,0.40);"></div><div class="b" style="left:24.2px;top:224px;width:428.40px;height:1.00px;background:rgba(90,90,90,0.40);"></div><div class="b" style="left:24.2px;top:236px;width:428.40px;height:1.00px;background:rgba(90,90,90,0.40);"></div><div class="b" style="left:24.2px;top:249px;width:428.40px;height:1.00px;background:rgba(90,90,90,0.40);"></div><div class="b" style="left:24.2px;top:261px;width:428.40px;height:1.00px;background:rgba(90,90,90,0.40);"></div><div class="b" style="left:24.2px;top:274px;width:428.40px;height:1.00px;background:rgba(90,90,90,0.40);"></div><div class="b" style="left:24.2px;top:286px;width:428.40px;height:1.00px;background:rgba(90,90,90,0.40);"></div><div class="b" style="left:24.2px;top:299px;width:428.40px;height:1.00px;background:rgba(90,90,90,0.40);"></div><div class="b" style="left:24.2px;top:311px;width:428.40px;height:1.00px;background:rgba(90,90,90,0.40);"></div><div class="b" style="left:24.2px;top:323px;width:428.40px;height:1.00px;background:rgba(90,90,90,0.40);"></div><div class="b" style="left:24.2px;top:336px;width:428.40px;height:1.00px;background:rgba(90,90,90,0.40);"></div><div class="b" style="left:24.2px;top:348px;width:428.40px;height:1.00px;background:rgba(90,90,90,0.40);"></div><div class="b" style="left:24.2px;top:361px;width:428.40px;height:1.00px;background:rgba(90,90,90,0.40);"></div><div class="b" style="left:24.2px;top:373px;width:428.40px;height:1.00px;background:rgba(90,90,90,0.40);"></div><div class="b" style="left:24.2px;top:386px;width:428.40px;height:1.00px;background:rgba(90,90,90,0.40);"></div><div class="b" style="left:465.6px;top:129.2px;width:230.70px;height:138.30px;background:#5b9bd5;"></div><div class="b" style="left:470.4px;top:133.3px;width:42.70px;height:8.40px;background:linear-gradient(#e4e4e4,#d0d0d0);border:0.6px solid #b4b4b4;border-radius:2.2px;"></div><div class="t" style="left:472.2px;top:133.96px;height:7.48px;line-height:7.48px;font-size:5.75px;color:#1a1a1a;font-weight:400;">Count of Status</div><div class="b" style="left:469.4px;top:200.2px;width:26.60px;height:8.30px;background:linear-gradient(#e4e4e4,#d0d0d0);border:0.6px solid #b4b4b4;border-radius:2.2px;"></div><div class="t" style="left:471.2px;top:200.81px;height:7.48px;line-height:7.48px;font-size:5.75px;color:#1a1a1a;font-weight:400;">Status</div><svg class="b" style="left:489.0px;top:203.35px;" width="4" height="2.2" viewBox="0 0 4 2.2"><path d="M0 0 L4 0 L2 2.2 Z" fill="#222"/></svg><div class="t" style="left:554.8px;top:146.97px;height:12.87px;line-height:12.87px;font-size:9.9px;color:#fff;font-weight:700;letter-spacing:0.35px;transform:scaleX(0.84);transform-origin:0 50%;">COUNT OF STATUS</div><div class="b" style="left:549.1px;top:166.7px;width:1.00px;height:85.60px;background:rgba(255,255,255,0.15);"></div><div class="b" style="left:564.0px;top:166.7px;width:1.00px;height:85.60px;background:rgba(255,255,255,0.15);"></div><div class="b" style="left:578.9px;top:166.7px;width:1.00px;height:85.60px;background:rgba(255,255,255,0.15);"></div><div class="b" style="left:593.8000000000001px;top:166.7px;width:1.00px;height:85.60px;background:rgba(255,255,255,0.15);"></div><div class="b" style="left:608.7px;top:166.7px;width:1.00px;height:85.60px;background:rgba(255,255,255,0.15);"></div><div class="b" style="left:623.6px;top:166.7px;width:1.00px;height:85.60px;background:rgba(255,255,255,0.15);"></div><div class="b" style="left:638.5px;top:166.7px;width:1.00px;height:85.60px;background:rgba(255,255,255,0.15);"></div><div class="b" style="left:653.4px;top:166.7px;width:1.00px;height:85.60px;background:rgba(255,255,255,0.15);"></div><div class="b" style="left:668.3000000000001px;top:166.7px;width:1.00px;height:85.60px;background:rgba(255,255,255,0.15);"></div><div class="b" style="left:683.2px;top:166.7px;width:1.00px;height:85.60px;background:rgba(255,255,255,0.15);"></div><div class="t" style="left:349.6px;width:400px;text-align:center;top:257.12px;height:7.15px;line-height:7.15px;font-size:5.5px;color:#fff;font-weight:400;transform:scaleX(0.88);transform-origin:50% 50%;">10.4</div><div class="t" style="left:364.5px;width:400px;text-align:center;top:257.12px;height:7.15px;line-height:7.15px;font-size:5.5px;color:#fff;font-weight:400;transform:scaleX(0.88);transform-origin:50% 50%;">10.6</div><div class="t" style="left:379.4px;width:400px;text-align:center;top:257.12px;height:7.15px;line-height:7.15px;font-size:5.5px;color:#fff;font-weight:400;transform:scaleX(0.88);transform-origin:50% 50%;">10.8</div><div class="t" style="left:394.30000000000007px;width:400px;text-align:center;top:257.12px;height:7.15px;line-height:7.15px;font-size:5.5px;color:#fff;font-weight:400;transform:scaleX(0.88);transform-origin:50% 50%;">11</div><div class="t" style="left:409.20000000000005px;width:400px;text-align:center;top:257.12px;height:7.15px;line-height:7.15px;font-size:5.5px;color:#fff;font-weight:400;transform:scaleX(0.88);transform-origin:50% 50%;">11.2</div><div class="t" style="left:424.1px;width:400px;text-align:center;top:257.12px;height:7.15px;line-height:7.15px;font-size:5.5px;color:#fff;font-weight:400;transform:scaleX(0.88);transform-origin:50% 50%;">11.4</div><div class="t" style="left:439.0px;width:400px;text-align:center;top:257.12px;height:7.15px;line-height:7.15px;font-size:5.5px;color:#fff;font-weight:400;transform:scaleX(0.88);transform-origin:50% 50%;">11.6</div><div class="t" style="left:453.9px;width:400px;text-align:center;top:257.12px;height:7.15px;line-height:7.15px;font-size:5.5px;color:#fff;font-weight:400;transform:scaleX(0.88);transform-origin:50% 50%;">11.8</div><div class="t" style="left:468.80000000000007px;width:400px;text-align:center;top:257.12px;height:7.15px;line-height:7.15px;font-size:5.5px;color:#fff;font-weight:400;transform:scaleX(0.88);transform-origin:50% 50%;">12</div><div class="t" style="left:483.70000000000005px;width:400px;text-align:center;top:257.12px;height:7.15px;line-height:7.15px;font-size:5.5px;color:#fff;font-weight:400;transform:scaleX(0.88);transform-origin:50% 50%;">12.2</div><svg class="b" style="left:549.6px;top:177.0px;" width="119.4" height="7.8" viewBox="0 0 119.4 7.8"><defs><pattern id="p1" width="1.6" height="1.6" patternUnits="userSpaceOnUse"><rect width="1.6" height="1.6" fill="#e6eff8"/><rect width="0.8" height="0.8" fill="#bcd4ec"/><rect x="0.8" y="0.8" width="0.8" height="0.8" fill="#bcd4ec"/></pattern></defs><rect width="119.40" height="7.80" fill="url(#p1)"/></svg><svg class="b" style="left:549.6px;top:205.4px;" width="119.4" height="7.9" viewBox="0 0 119.4 7.9"><defs><pattern id="p2" width="1.6" height="1.6" patternUnits="userSpaceOnUse"><rect width="1.6" height="1.6" fill="#e6eff8"/><rect width="0.8" height="0.8" fill="#bcd4ec"/><rect x="0.8" y="0.8" width="0.8" height="0.8" fill="#bcd4ec"/></pattern></defs><rect width="119.40" height="7.90" fill="url(#p2)"/></svg><svg class="b" style="left:549.6px;top:234.0px;" width="44.8" height="7.9" viewBox="0 0 44.8 7.9"><defs><pattern id="p3" width="1.6" height="1.6" patternUnits="userSpaceOnUse"><rect width="1.6" height="1.6" fill="#e6eff8"/><rect width="0.8" height="0.8" fill="#bcd4ec"/><rect x="0.8" y="0.8" width="0.8" height="0.8" fill="#bcd4ec"/></pattern></defs><rect width="44.80" height="7.90" fill="url(#p3)"/></svg><div class="t" style="left:145.0px;width:400px;text-align:right;top:177.55px;height:6.50px;line-height:6.50px;font-size:5.0px;color:#fff;font-weight:700;letter-spacing:1.05px;transform:scaleX(0.82);transform-origin:100% 50%;">TO BE STARTED</div><div class="t" style="left:145.0px;width:400px;text-align:right;top:206.45px;height:6.50px;line-height:6.50px;font-size:5.0px;color:#fff;font-weight:700;letter-spacing:1.05px;transform:scaleX(0.82);transform-origin:100% 50%;">IN REVIEW</div><div class="t" style="left:145.0px;width:400px;text-align:right;top:234.55px;height:6.50px;line-height:6.50px;font-size:5.0px;color:#fff;font-weight:700;letter-spacing:1.05px;transform:scaleX(0.82);transform-origin:100% 50%;">COMPLETED</div><div class="b" style="left:465.5px;top:272.6px;width:231.10px;height:127.40px;background:#fff;border:0.8px solid #bfbfbf;"></div><div class="b" style="left:471.3px;top:276.2px;width:41.90px;height:8.60px;background:linear-gradient(#e4e4e4,#d0d0d0);border:0.6px solid #b4b4b4;border-radius:2.2px;"></div><div class="t" style="left:473.1px;top:276.96px;height:7.48px;line-height:7.48px;font-size:5.75px;color:#1a1a1a;font-weight:400;">Count of Status</div><div class="t" style="left:553.0px;top:290.34px;height:10.92px;line-height:10.92px;font-size:8.4px;color:#595959;font-weight:400;transform:scaleX(0.964);transform-origin:0 50%;">Count of Status</div><div class="b" style="left:485.5px;top:308.05px;width:203.20px;height:0.90px;background:#e2e2e2;"></div><div class="t" style="left:80.0px;width:400px;text-align:right;top:305.23px;height:7.54px;line-height:7.54px;font-size:5.8px;color:#595959;font-weight:400;transform:scaleX(0.9);transform-origin:100% 50%;">12.2</div><div class="b" style="left:485.5px;top:316.32px;width:203.20px;height:0.90px;background:#e2e2e2;"></div><div class="t" style="left:80.0px;width:400px;text-align:right;top:313.50px;height:7.54px;line-height:7.54px;font-size:5.8px;color:#595959;font-weight:400;transform:scaleX(0.9);transform-origin:100% 50%;">12</div><div class="b" style="left:485.5px;top:324.59000000000003px;width:203.20px;height:0.90px;background:#e2e2e2;"></div><div class="t" style="left:80.0px;width:400px;text-align:right;top:321.77px;height:7.54px;line-height:7.54px;font-size:5.8px;color:#595959;font-weight:400;transform:scaleX(0.9);transform-origin:100% 50%;">11.8</div><div class="b" style="left:485.5px;top:332.86px;width:203.20px;height:0.90px;background:#e2e2e2;"></div><div class="t" style="left:80.0px;width:400px;text-align:right;top:330.04px;height:7.54px;line-height:7.54px;font-size:5.8px;color:#595959;font-weight:400;transform:scaleX(0.9);transform-origin:100% 50%;">11.6</div><div class="b" style="left:485.5px;top:341.13px;width:203.20px;height:0.90px;background:#e2e2e2;"></div><div class="t" style="left:80.0px;width:400px;text-align:right;top:338.31px;height:7.54px;line-height:7.54px;font-size:5.8px;color:#595959;font-weight:400;transform:scaleX(0.9);transform-origin:100% 50%;">11.4</div><div class="b" style="left:485.5px;top:349.40000000000003px;width:203.20px;height:0.90px;background:#e2e2e2;"></div><div class="t" style="left:80.0px;width:400px;text-align:right;top:346.58px;height:7.54px;line-height:7.54px;font-size:5.8px;color:#595959;font-weight:400;transform:scaleX(0.9);transform-origin:100% 50%;">11.2</div><div class="b" style="left:485.5px;top:357.67px;width:203.20px;height:0.90px;background:#e2e2e2;"></div><div class="t" style="left:80.0px;width:400px;text-align:right;top:354.85px;height:7.54px;line-height:7.54px;font-size:5.8px;color:#595959;font-weight:400;transform:scaleX(0.9);transform-origin:100% 50%;">11</div><div class="b" style="left:485.5px;top:365.94px;width:203.20px;height:0.90px;background:#e2e2e2;"></div><div class="t" style="left:80.0px;width:400px;text-align:right;top:363.12px;height:7.54px;line-height:7.54px;font-size:5.8px;color:#595959;font-weight:400;transform:scaleX(0.9);transform-origin:100% 50%;">10.8</div><div class="b" style="left:485.5px;top:374.21px;width:203.20px;height:0.90px;background:#e2e2e2;"></div><div class="t" style="left:80.0px;width:400px;text-align:right;top:371.39px;height:7.54px;line-height:7.54px;font-size:5.8px;color:#595959;font-weight:400;transform:scaleX(0.9);transform-origin:100% 50%;">10.6</div><div class="b" style="left:485.5px;top:382.48px;width:203.20px;height:0.90px;background:#e2e2e2;"></div><div class="t" style="left:80.0px;width:400px;text-align:right;top:379.66px;height:7.54px;line-height:7.54px;font-size:5.8px;color:#595959;font-weight:400;transform:scaleX(0.9);transform-origin:100% 50%;">10.4</div><div class="b" style="left:508.9px;top:358.6px;width:20.90px;height:24.30px;background:#5b9bd5;"></div><div class="b" style="left:576.7px;top:316.9px;width:21.30px;height:66.00px;background:#5b9bd5;"></div><div class="b" style="left:644.6px;top:316.9px;width:21.60px;height:66.00px;background:#5b9bd5;"></div><svg class="b" style="left:4px;top:1px;" width="10" height="9" viewBox="0 0 10 9"><path d="M5.8 1.2 L8.8 1.6 L8.8 7.6 L5.8 8 Z" fill="#a9d4b7"/><path d="M1 1.2 L6.4 0.6 L6.4 8.4 L1 7.8 Z" fill="#1e7145"/><path d="M2.4 3.2 L4.6 6.2 M4.6 3.2 L2.4 6.2" stroke="#fff" stroke-width="0.9"/></svg><svg class="b" style="left:19px;top:1.7px;" width="7.2" height="7.2" viewBox="0 0 7.2 7.2"><rect x="0" y="0" width="7" height="7" fill="#8b5fb4" rx="0.6"/><rect x="1.6" y="1.4" width="3.9" height="1.7" fill="#fff"/><rect x="2.4" y="4.7" width="2.3" height="1.9" fill="#e9dff2"/></svg><svg class="b" style="left:32px;top:0.5px;" width="14" height="9" viewBox="0 0 14 9"><path d="M2.5 3.2 L5.5 3.2 Q8.3 3.4 8.3 5.4 Q8.3 7.3 5.6 7.6" fill="none" stroke="#8a8a8a" stroke-width="1.1"/><path d="M0.8 3.2 L3.4 1 L3.4 5.4 Z" fill="#8a8a8a"/><path d="M11 4.2 L12.8 4.2" stroke="#aaa" stroke-width="0.7"/></svg><svg class="b" style="left:51px;top:0.5px;" width="14" height="9" viewBox="0 0 14 9"><path d="M6.5 3.2 L4.5 3.2 Q1.7 3.4 1.7 5.4 Q1.7 7.3 4.4 7.6" fill="none" stroke="#a5a5a5" stroke-width="1.1"/><path d="M8.2 3.2 L5.6 1 L5.6 5.4 Z" fill="#a5a5a5"/><path d="M10.6 4.2 L12.4 4.2" stroke="#aaa" stroke-width="0.7"/></svg><div class="b" style="left:69.5px;top:0px;width:41.10px;height:10.20px;background:#fff;border:0.7px solid #c6c6c6;"></div><div class="t" style="left:71.2px;top:1.56px;height:7.28px;line-height:7.28px;font-size:5.6px;color:#222;font-weight:400;">Arial</div><svg class="b" style="left:105.5px;top:4.3px;" width="3.4" height="2" viewBox="0 0 3.4 2"><path d="M0 0 L3.4 0 L1.7 2 Z" fill="#555"/></svg><svg class="b" style="left:114.5px;top:3.5px;" width="4" height="5" viewBox="0 0 4 5"><path d="M0.3 1 L3.7 1" stroke="#555" stroke-width="0.6"/><path d="M0.3 2.6 L3.7 2.6 L2 4.4 Z" fill="#555"/></svg><div class="t" style="left:340.6px;top:2.57px;height:7.25px;line-height:7.25px;font-size:5.58px;color:#8a8a8a;font-weight:400;">Work Breakdown Structure - Excel</div><div class="t" style="left:504.70000000000005px;width:400px;text-align:center;top:1.58px;height:8.84px;line-height:8.84px;font-size:6.8px;color:#999;font-weight:400;">?</div><svg class="b" style="left:714.5px;top:2.5px;" width="8" height="7" viewBox="0 0 8 7"><rect x="0.5" y="0.5" width="7" height="6" fill="none" stroke="#999" stroke-width="0.6"/><path d="M0.5 2 L7.5 2" stroke="#999" stroke-width="0.6"/><path d="M2.5 3.2 L5.5 3.2 L4 5 Z" fill="#999"/></svg><div class="b" style="left:730px;top:6.0px;width:5.30px;height:0.70px;background:#999;"></div><svg class="b" style="left:743.5px;top:2.5px;" width="7" height="7" viewBox="0 0 7 7"><rect x="0.5" y="2" width="4.5" height="4.5" fill="none" stroke="#999" stroke-width="0.6"/><path d="M2 2 L2 0.5 L6.5 0.5 L6.5 5 L5 5" fill="none" stroke="#999" stroke-width="0.6"/></svg><svg class="b" style="left:757.5px;top:2.8px;" width="6" height="6" viewBox="0 0 6 6"><path d="M0.5 0.5 L5.5 5.5 M5.5 0.5 L0.5 5.5" stroke="#999" stroke-width="0.7"/></svg><div class="b" style="left:0px;top:23.0px;width:768.00px;height:1.00px;background:#dadada;"></div><div class="b" style="left:0px;top:12.0px;width:28.00px;height:12.00px;background:#217346;"></div><div class="t" style="left:-186.0px;width:400px;text-align:center;top:14.55px;height:6.89px;line-height:6.89px;font-size:5.3px;color:#fff;font-weight:400;">FILE</div><div class="b" style="left:30.6px;top:12.0px;width:29.20px;height:12.20px;background:#fff;border:0.7px solid #dadada;border-bottom:none;"></div><div class="t" style="left:-154.8px;width:400px;text-align:center;top:14.55px;height:6.89px;line-height:6.89px;font-size:5.3px;color:#217346;font-weight:400;">HOME</div><div class="t" style="left:-124.0px;width:400px;text-align:center;top:14.55px;height:6.89px;line-height:6.89px;font-size:5.3px;color:#555;font-weight:400;">INSERT</div><div class="t" style="left:-83.45px;width:400px;text-align:center;top:14.55px;height:6.89px;line-height:6.89px;font-size:5.3px;color:#555;font-weight:400;">PAGE LAYOUT</div><div class="t" style="left:-36.44999999999999px;width:400px;text-align:center;top:14.55px;height:6.89px;line-height:6.89px;font-size:5.3px;color:#555;font-weight:400;">FORMULAS</div><div class="t" style="left:-0.9000000000000057px;width:400px;text-align:center;top:14.55px;height:6.89px;line-height:6.89px;font-size:5.3px;color:#555;font-weight:400;">DATA</div><div class="t" style="left:29.400000000000006px;width:400px;text-align:center;top:14.55px;height:6.89px;line-height:6.89px;font-size:5.3px;color:#555;font-weight:400;">REVIEW</div><div class="t" style="left:59.5px;width:400px;text-align:center;top:14.55px;height:6.89px;line-height:6.89px;font-size:5.3px;color:#555;font-weight:400;">VIEW</div><div class="t" style="left:91.35000000000002px;width:400px;text-align:center;top:14.55px;height:6.89px;line-height:6.89px;font-size:5.3px;color:#555;font-weight:400;">ADD-INS</div><div class="t" style="left:124.19999999999999px;width:400px;text-align:center;top:14.55px;height:6.89px;line-height:6.89px;font-size:5.3px;color:#555;font-weight:400;">TEAM</div><div class="t" style="left:715.0px;top:14.46px;height:7.28px;line-height:7.28px;font-size:5.6px;color:#333;font-weight:400;">Ivan Walsh</div><svg class="b" style="left:745.5px;top:17px;" width="3.4" height="2" viewBox="0 0 3.4 2"><path d="M0 0 L3.4 0 L1.7 2 Z" fill="#666"/></svg><div class="b" style="left:752.5px;top:12.5px;width:10.30px;height:10.00px;background:#1e4e79;"></div><div class="t" style="left:557.6px;width:400px;text-align:center;top:12.73px;height:9.75px;line-height:9.75px;font-size:7.5px;color:#fff;font-weight:400;">K</div><div class="b" style="left:0px;top:67.8px;width:768.00px;height:1.00px;background:#d8d8d8;"></div><div class="t" style="left:-166.0px;width:400px;text-align:center;top:60.63px;height:7.35px;line-height:7.35px;font-size:5.65px;color:#666;font-weight:400;">Clipboard</div><svg class="b" style="left:69.0px;top:61.8px;" width="5" height="5" viewBox="0 0 5 5"><path d="M0.5 0.5 L3.5 0.5 M0.5 0.5 L0.5 3.5" stroke="#888" stroke-width="0.6" fill="none"/><path d="M1.5 1.5 L4.2 4.2 M4.5 2.5 L4.5 4.5 L2.5 4.5" stroke="#888" stroke-width="0.6" fill="none"/></svg><div class="t" style="left:-78.6px;width:400px;text-align:center;top:60.63px;height:7.35px;line-height:7.35px;font-size:5.65px;color:#666;font-weight:400;">Font</div><svg class="b" style="left:168.0px;top:61.8px;" width="5" height="5" viewBox="0 0 5 5"><path d="M0.5 0.5 L3.5 0.5 M0.5 0.5 L0.5 3.5" stroke="#888" stroke-width="0.6" fill="none"/><path d="M1.5 1.5 L4.2 4.2 M4.5 2.5 L4.5 4.5 L2.5 4.5" stroke="#888" stroke-width="0.6" fill="none"/></svg><div class="t" style="left:34.5px;width:400px;text-align:center;top:60.63px;height:7.35px;line-height:7.35px;font-size:5.65px;color:#666;font-weight:400;">Alignment</div><svg class="b" style="left:295.2px;top:61.8px;" width="5" height="5" viewBox="0 0 5 5"><path d="M0.5 0.5 L3.5 0.5 M0.5 0.5 L0.5 3.5" stroke="#888" stroke-width="0.6" fill="none"/><path d="M1.5 1.5 L4.2 4.2 M4.5 2.5 L4.5 4.5 L2.5 4.5" stroke="#888" stroke-width="0.6" fill="none"/></svg><div class="t" style="left:132.0px;width:400px;text-align:center;top:60.63px;height:7.35px;line-height:7.35px;font-size:5.65px;color:#666;font-weight:400;">Number</div><svg class="b" style="left:362.0px;top:61.8px;" width="5" height="5" viewBox="0 0 5 5"><path d="M0.5 0.5 L3.5 0.5 M0.5 0.5 L0.5 3.5" stroke="#888" stroke-width="0.6" fill="none"/><path d="M1.5 1.5 L4.2 4.2 M4.5 2.5 L4.5 4.5 L2.5 4.5" stroke="#888" stroke-width="0.6" fill="none"/></svg><div class="t" style="left:258.0px;width:400px;text-align:center;top:60.63px;height:7.35px;line-height:7.35px;font-size:5.65px;color:#666;font-weight:400;">Styles</div><div class="t" style="left:379.29999999999995px;width:400px;text-align:center;top:60.63px;height:7.35px;line-height:7.35px;font-size:5.65px;color:#666;font-weight:400;">Cells</div><div class="t" style="left:457.0px;width:400px;text-align:center;top:60.63px;height:7.35px;line-height:7.35px;font-size:5.65px;color:#666;font-weight:400;">Editing</div><div class="b" style="left:75.19999999999999px;top:26px;width:0.80px;height:41.00px;background:#e1e1e1;"></div><div class="b" style="left:174.6px;top:26px;width:0.80px;height:41.00px;background:#e1e1e1;"></div><div class="b" style="left:301.0px;top:26px;width:0.80px;height:41.00px;background:#e1e1e1;"></div><div class="b" style="left:368.0px;top:26px;width:0.80px;height:41.00px;background:#e1e1e1;"></div><div class="b" style="left:546.4px;top:26px;width:0.80px;height:41.00px;background:#e1e1e1;"></div><div class="b" style="left:611.9px;top:26px;width:0.80px;height:41.00px;background:#e1e1e1;"></div><div class="b" style="left:701.1px;top:26px;width:0.80px;height:41.00px;background:#e1e1e1;"></div><svg class="b" style="left:758.5px;top:62.5px;" width="6" height="4" viewBox="0 0 6 4"><path d="M0.5 3.5 L3 1 L5.5 3.5" fill="none" stroke="#555" stroke-width="0.8"/></svg><svg class="b" style="left:5px;top:26.5px;" width="16" height="16" viewBox="0 0 16 16"><rect x="1" y="2.5" width="12" height="12" fill="#eec26e"/><path d="M2.4 4.4 L2.8 2.6 L5.2 2.2 Q7 0.4 8.8 2.2 L11.2 2.6 L11.6 4.4 Z" fill="#6a6a6a"/><path d="M7.9 6.8 L12.4 6.8 L14.8 9.2 L14.8 15.3 L7.9 15.3 Z" fill="#fff" stroke="#8a8a8a" stroke-width="0.6"/></svg><div class="t" style="left:-187.8px;width:400px;text-align:center;top:43.93px;height:7.35px;line-height:7.35px;font-size:5.65px;color:#333;font-weight:400;">Paste</div><svg class="b" style="left:10.0px;top:53.9px;" width="3.2" height="2.0" viewBox="0 0 3.2 2.0"><path d="M0 0 L3.2 0 L1.6 2 Z" fill="#555"/></svg><svg class="b" style="left:23px;top:26.6px;" width="9" height="9" viewBox="0 0 9 9"><path d="M2.3 0.4 L5.6 5.6 M6.7 0.4 L3.4 5.6" stroke="#555" stroke-width="0.8"/><circle cx="2.4" cy="7" r="1.35" fill="none" stroke="#4a86c5" stroke-width="0.75"/><circle cx="6.6" cy="7" r="1.35" fill="none" stroke="#4a86c5" stroke-width="0.75"/></svg><div class="t" style="left:33.1px;top:27.93px;height:7.35px;line-height:7.35px;font-size:5.65px;color:#333;font-weight:400;">Cut</div><svg class="b" style="left:23.2px;top:37.8px;" width="8.5" height="8.5" viewBox="0 0 8.5 8.5"><path d="M0.4 0.4 L3.4 0.4 L4.4 1.4 L4.4 6.2 L0.4 6.2 Z" fill="#f4f4f4" stroke="#8a8a8a" stroke-width="0.55"/><path d="M1.2 2.2h2.4M1.2 3.4h2.4M1.2 4.6h2.4" stroke="#8fb3dc" stroke-width="0.5"/><path d="M3.2 2.6 L6.6 2.6 L7.8 3.8 L7.8 8.1 L3.2 8.1 Z" fill="#fff" stroke="#8a8a8a" stroke-width="0.55"/><rect x="4.2" y="4.2" width="2.6" height="2.8" fill="#9cc0e6"/></svg><div class="t" style="left:33.1px;top:38.93px;height:7.35px;line-height:7.35px;font-size:5.65px;color:#333;font-weight:400;">Copy</div><svg class="b" style="left:50.699999999999996px;top:41.2px;" width="3.2" height="2.0" viewBox="0 0 3.2 2.0"><path d="M0 0 L3.2 0 L1.6 2 Z" fill="#555"/></svg><svg class="b" style="left:23.5px;top:49.5px;" width="8" height="7.5" viewBox="0 0 8 7.5"><path d="M0.8 5.5 L3.5 2.8 L5.5 4.8 L2.8 7.2 Z" fill="#e8b55c"/><path d="M3.5 2.8 L6.5 0.6 L7.6 1.7 L5.5 4.8 Z" fill="#444"/></svg><div class="t" style="left:33.1px;top:49.53px;height:7.35px;line-height:7.35px;font-size:5.65px;color:#333;font-weight:400;">Format Painter</div><div class="b" style="left:77.8px;top:29.4px;width:53.50px;height:10.80px;background:#fff;border:0.7px solid #c6c6c6;"></div><div class="t" style="left:79.3px;top:31.73px;height:7.54px;line-height:7.54px;font-size:5.8px;color:#222;font-weight:400;">Arial</div><svg class="b" style="left:125.7px;top:34.2px;" width="3.2" height="2.0" viewBox="0 0 3.2 2.0"><path d="M0 0 L3.2 0 L1.6 2 Z" fill="#555"/></svg><div class="b" style="left:131.0px;top:29.4px;width:20.80px;height:10.80px;background:#fff;border:0.7px solid #c6c6c6;"></div><div class="t" style="left:132.5px;top:31.73px;height:7.54px;line-height:7.54px;font-size:5.8px;color:#222;font-weight:400;">8</div><svg class="b" style="left:146.4px;top:34.2px;" width="3.2" height="2.0" viewBox="0 0 3.2 2.0"><path d="M0 0 L3.2 0 L1.6 2 Z" fill="#555"/></svg><div class="t" style="left:-43.099999999999994px;width:400px;text-align:center;top:31.44px;height:8.32px;line-height:8.32px;font-size:6.4px;color:#555;font-weight:400;">A</div><svg class="b" style="left:158.8px;top:31.2px;" width="2.6" height="1.8" viewBox="0 0 2.6 1.8"><path d="M0 1.8 L1.3 0 L2.6 1.8 Z" fill="#2e75b6"/></svg><div class="t" style="left:-32.599999999999994px;width:400px;text-align:center;top:32.49px;height:7.02px;line-height:7.02px;font-size:5.4px;color:#555;font-weight:400;">A</div><svg class="b" style="left:169.2px;top:31.6px;" width="2.6" height="1.8" viewBox="0 0 2.6 1.8"><path d="M0 0 L2.6 0 L1.3 1.8 Z" fill="#2e75b6"/></svg><div class="t" style="left:-117.6px;width:400px;text-align:center;top:45.20px;height:8.19px;line-height:8.19px;font-size:6.3px;color:#555;font-weight:700;">B</div><div class="t" style="left:-106.6px;width:400px;text-align:center;top:45.20px;height:8.19px;line-height:8.19px;font-size:6.3px;color:#555;font-weight:400;font-style:italic;">I</div><div class="t" style="left:-96.1px;width:400px;text-align:center;top:44.91px;height:8.19px;line-height:8.19px;font-size:6.3px;color:#555;font-weight:400;text-decoration:underline;">U</div><svg class="b" style="left:110.4px;top:48.5px;" width="3.2" height="2.0" viewBox="0 0 3.2 2.0"><path d="M0 0 L3.2 0 L1.6 2 Z" fill="#555"/></svg><div class="b" style="left:117.3px;top:44.5px;width:0.60px;height:10.50px;background:#e1e1e1;"></div><svg class="b" style="left:121.0px;top:45.5px;" width="7.6" height="7.6" viewBox="0 0 7.6 7.6"><rect x="0.5" y="0.5" width="6.6" height="6.6" fill="none" stroke="#c4c4c4" stroke-width="0.85"/><path d="M3.8 0.5 L3.8 7.1 M0.5 3.8 L7.1 3.8" stroke="#c4c4c4" stroke-width="0.7"/></svg><svg class="b" style="left:131.20000000000002px;top:48.5px;" width="3.2" height="2.0" viewBox="0 0 3.2 2.0"><path d="M0 0 L3.2 0 L1.6 2 Z" fill="#555"/></svg><div class="b" style="left:137.4px;top:44.5px;width:0.60px;height:10.50px;background:#e6e6e6;"></div><svg class="b" style="left:141.5px;top:44.2px;" width="9" height="7.5" viewBox="0 0 9 7.5"><path d="M1.6 4.2 L4.4 1.4 L7.2 4.2 L4.4 6.9 Z" fill="#fff" stroke="#666" stroke-width="0.65"/><path d="M3.2 1 L4.6 0.4" stroke="#666" stroke-width="0.6"/><ellipse cx="7.9" cy="5.3" rx="0.8" ry="1.2" fill="#2e75b6"/></svg><div class="b" style="left:141.3px;top:51.3px;width:7.90px;height:1.90px;background:#ffff00;"></div><svg class="b" style="left:151.70000000000002px;top:48.5px;" width="3.2" height="2.0" viewBox="0 0 3.2 2.0"><path d="M0 0 L3.2 0 L1.6 2 Z" fill="#555"/></svg><div class="t" style="left:-38.400000000000006px;width:400px;text-align:center;top:44.24px;height:8.32px;line-height:8.32px;font-size:6.4px;color:#555;font-weight:400;">A</div><div class="b" style="left:157.8px;top:51.2px;width:7.80px;height:2.00px;background:#ff0000;"></div><svg class="b" style="left:168.20000000000002px;top:48.5px;" width="3.2" height="2.0" viewBox="0 0 3.2 2.0"><path d="M0 0 L3.2 0 L1.6 2 Z" fill="#555"/></svg><svg class="b" style="left:178.8px;top:29.8px;" width="7.2" height="5" viewBox="0 0 7.2 5"><rect x="0" y="0.2" width="7" height="0.8" fill="#9a9a9a"/><rect x="0" y="1.7" width="7" height="0.8" fill="#a5a5a5"/><rect x="0" y="3.2" width="7" height="0.8" fill="#a5a5a5"/></svg><svg class="b" style="left:189.4px;top:31.8px;" width="7.2" height="5" viewBox="0 0 7.2 5"><rect x="0" y="0.2" width="7" height="0.8" fill="#a5a5a5"/><rect x="0" y="1.7" width="7" height="0.8" fill="#a5a5a5"/><rect x="0" y="3.2" width="7" height="0.8" fill="#a5a5a5"/></svg><div class="b" style="left:198.2px;top:29.2px;width:10.70px;height:10.80px;background:#a3d5b5;"></div><svg class="b" style="left:199.9px;top:34.8px;" width="7.2" height="4.5" viewBox="0 0 7.2 4.5"><rect x="0" y="0.2" width="7" height="0.8" fill="#7d8f83"/><rect x="0" y="1.7" width="7" height="0.8" fill="#7d8f83"/><rect x="0" y="3.2" width="7" height="0.8" fill="#7d8f83"/></svg><svg class="b" style="left:213.5px;top:30.2px;" width="11" height="9" viewBox="0 0 11 9"><g transform="rotate(-45 5 4.5)"><text x="1" y="6" font-size="5.6" font-family="Liberation Sans" fill="#777" font-weight="700">ab</text></g><path d="M2.8 8.4 L9.6 1.6" stroke="#888" stroke-width="0.6"/><path d="M9.9 1.3 L7.9 1.8 L9.4 3.3 Z" fill="#888"/></svg><svg class="b" style="left:223.70000000000002px;top:33.8px;" width="3.2" height="2.0" viewBox="0 0 3.2 2.0"><path d="M0 0 L3.2 0 L1.6 2 Z" fill="#555"/></svg><svg class="b" style="left:179px;top:46.5px;" width="7" height="5.5" viewBox="0 0 7 5.5"><rect x="0" y="0" width="7" height="0.75" fill="#a0a0a0"/><rect x="0" y="1.5" width="4.5" height="0.75" fill="#a0a0a0"/><rect x="0" y="3" width="7" height="0.75" fill="#a0a0a0"/><rect x="0" y="4.5" width="4.5" height="0.75" fill="#a0a0a0"/></svg><svg class="b" style="left:189.5px;top:46.5px;" width="7" height="5.5" viewBox="0 0 7 5.5"><rect x="0" y="0" width="7" height="0.75" fill="#a0a0a0"/><rect x="1.2" y="1.5" width="4.5" height="0.75" fill="#a0a0a0"/><rect x="0" y="3" width="7" height="0.75" fill="#a0a0a0"/><rect x="1.2" y="4.5" width="4.5" height="0.75" fill="#a0a0a0"/></svg><svg class="b" style="left:200px;top:46.5px;" width="7" height="5.5" viewBox="0 0 7 5.5"><rect x="0" y="0" width="7" height="0.75" fill="#a0a0a0"/><rect x="2.5" y="1.5" width="4.5" height="0.75" fill="#a0a0a0"/><rect x="0" y="3" width="7" height="0.75" fill="#a0a0a0"/><rect x="2.5" y="4.5" width="4.5" height="0.75" fill="#a0a0a0"/></svg><div class="b" style="left:210.2px;top:44.5px;width:0.60px;height:10.50px;background:#e6e6e6;"></div><svg class="b" style="left:214.2px;top:46.3px;" width="8.5" height="5.8" viewBox="0 0 8.5 5.8"><rect x="3.2" y="0" width="5.2" height="0.7" fill="#a0a0a0"/><rect x="3.2" y="1.6" width="5.2" height="0.7" fill="#a0a0a0"/><rect x="3.2" y="3.2" width="5.2" height="0.7" fill="#a0a0a0"/><rect x="2" y="4.8" width="6.4" height="0.7" fill="#a0a0a0"/><path d="M0 2.2 L2.4 0.6 L2.4 3.8 Z" fill="#2e75b6"/><rect x="1.6" y="1.8" width="2.8" height="0.8" fill="#2e75b6"/></svg><svg class="b" style="left:225px;top:46.3px;" width="8.5" height="5.8" viewBox="0 0 8.5 5.8"><rect x="3.2" y="0" width="5.2" height="0.7" fill="#a0a0a0"/><rect x="3.2" y="1.6" width="5.2" height="0.7" fill="#a0a0a0"/><rect x="3.2" y="3.2" width="5.2" height="0.7" fill="#a0a0a0"/><rect x="2" y="4.8" width="6.4" height="0.7" fill="#a0a0a0"/><path d="M3.6 2.2 L1.2 0.6 L1.2 3.8 Z" fill="#2e75b6"/><rect x="0" y="1.8" width="2.2" height="0.8" fill="#2e75b6"/></svg><div class="b" style="left:236.3px;top:26px;width:0.60px;height:34.00px;background:#e1e1e1;"></div><svg class="b" style="left:239.8px;top:30.8px;" width="8" height="8" viewBox="0 0 8 8"><rect x="0.5" y="0.5" width="6" height="7" fill="#fff" stroke="#999" stroke-width="0.6"/><path d="M0.5 2.5h6M0.5 5h6" stroke="#aaa" stroke-width="0.5"/><path d="M3 3.8 L7 3.8 Q7.8 5.5 6 6.5" fill="none" stroke="#2e75b6" stroke-width="0.7"/></svg><div class="t" style="left:249.3px;top:31.73px;height:7.35px;line-height:7.35px;font-size:5.65px;color:#333;font-weight:400;">Wrap Text</div><svg class="b" style="left:239.8px;top:45.4px;" width="8" height="7.5" viewBox="0 0 8 7.5"><rect x="0.5" y="0.5" width="7" height="6.5" fill="#fff" stroke="#888" stroke-width="0.6"/><path d="M0.5 2.5h7M0.5 5h7" stroke="#aaa" stroke-width="0.5"/><path d="M1.5 3.75h5" stroke="#2e75b6" stroke-width="0.6"/></svg><div class="t" style="left:249.3px;top:46.33px;height:7.35px;line-height:7.35px;font-size:5.65px;color:#333;font-weight:400;">Merge &amp; Center</div><svg class="b" style="left:294.4px;top:48.8px;" width="3.2" height="2.0" viewBox="0 0 3.2 2.0"><path d="M0 0 L3.2 0 L1.6 2 Z" fill="#555"/></svg><div class="b" style="left:303.9px;top:29.2px;width:63.10px;height:10.80px;background:#fff;border:0.7px solid #c6c6c6;"></div><div class="t" style="left:305.6px;top:31.53px;height:7.54px;line-height:7.54px;font-size:5.8px;color:#222;font-weight:400;">General</div><svg class="b" style="left:361.4px;top:33.8px;" width="3.2" height="2.0" viewBox="0 0 3.2 2.0"><path d="M0 0 L3.2 0 L1.6 2 Z" fill="#555"/></svg><svg class="b" style="left:304.6px;top:44.6px;" width="9.5" height="9" viewBox="0 0 9.5 9"><rect x="0.4" y="0.4" width="8" height="4.6" fill="#fff" stroke="#3d7fc6" stroke-width="0.8"/><path d="M1.8 2.7 L3 1.7 L3 3.7 Z M7 2.7 L5.8 1.7 L5.8 3.7 Z" fill="#444"/><ellipse cx="6.4" cy="5.9" rx="1.8" ry="0.9" fill="#eab565"/><ellipse cx="4.2" cy="7.6" rx="1.8" ry="0.9" fill="#eab565"/></svg><svg class="b" style="left:315.8px;top:49.1px;" width="2.6" height="1.0" viewBox="0 0 2.6 1.0"><rect width="2.6" height="1" fill="#666"/></svg><div class="t" style="left:125.89999999999998px;width:400px;text-align:center;top:45.52px;height:9.36px;line-height:9.36px;font-size:7.2px;color:#505050;font-weight:400;">%</div><div class="t" style="left:135.39999999999998px;width:400px;text-align:center;top:41.80px;height:10.40px;line-height:10.40px;font-size:8.0px;color:#505050;font-weight:700;">,</div><div class="b" style="left:343.2px;top:44.5px;width:0.60px;height:10.50px;background:#e1e1e1;"></div><div class="t" style="left:151.0px;width:400px;text-align:center;top:44.73px;height:4.55px;line-height:4.55px;font-size:3.5px;color:#555;font-weight:400;">.0</div><div class="t" style="left:151.0px;width:400px;text-align:center;top:48.73px;height:4.55px;line-height:4.55px;font-size:3.5px;color:#555;font-weight:400;">.00</div><svg class="b" style="left:346.8px;top:45.8px;" width="3" height="2.5" viewBox="0 0 3 2.5"><path d="M0 1.25 L3 1.25 M1.5 0 L1.5 2.5" stroke="#2e75b6" stroke-width="0.6"/></svg><div class="t" style="left:161.0px;width:400px;text-align:center;top:44.73px;height:4.55px;line-height:4.55px;font-size:3.5px;color:#555;font-weight:400;">.00</div><div class="t" style="left:161.0px;width:400px;text-align:center;top:48.73px;height:4.55px;line-height:4.55px;font-size:3.5px;color:#555;font-weight:400;">.0</div><svg class="b" style="left:357px;top:50px;" width="3" height="1" viewBox="0 0 3 1"><path d="M0 0.5 L3 0.5" stroke="#2e75b6" stroke-width="0.7"/></svg><svg class="b" style="left:381.4px;top:27.9px;" width="15" height="15" viewBox="0 0 15 15"><rect x="0.5" y="0.5" width="11" height="12" fill="#fff" stroke="#999" stroke-width="0.5"/><path d="M0.5 3.5h11M0.5 6.5h11M0.5 9.5h11M4 0.5v12M8 0.5v12" stroke="#bbb" stroke-width="0.5"/><rect x="4" y="0.5" width="2.5" height="3" fill="#e2582b"/><rect x="4" y="3.5" width="5" height="3" fill="#2e75b6"/><rect x="4" y="6.5" width="3.5" height="3" fill="#e2582b"/><rect x="4" y="9.5" width="2" height="3" fill="#2e75b6"/><rect x="8" y="8.5" width="6.3" height="6" fill="#fff" stroke="#666" stroke-width="0.6"/><path d="M10 13 L12.5 10.5" stroke="#666" stroke-width="0.6"/></svg><div class="t" style="left:188.3px;width:400px;text-align:center;top:44.23px;height:7.35px;line-height:7.35px;font-size:5.65px;color:#333;font-weight:400;">Conditional</div><div class="t" style="left:186.5px;width:400px;text-align:center;top:51.93px;height:7.35px;line-height:7.35px;font-size:5.65px;color:#333;font-weight:400;">Formatting</div><svg class="b" style="left:400.7px;top:54.6px;" width="3.2" height="2.0" viewBox="0 0 3.2 2.0"><path d="M0 0 L3.2 0 L1.6 2 Z" fill="#555"/></svg><svg class="b" style="left:412.5px;top:27.9px;" width="16" height="15" viewBox="0 0 16 15"><rect x="0.5" y="0.5" width="12" height="10" fill="#fff" stroke="#9a9a9a" stroke-width="0.5"/><rect x="3.5" y="2.5" width="9" height="8" fill="#cfe0f3"/><path d="M0.5 2.5h12M0.5 4.5h12M0.5 6.5h12M0.5 8.5h12M3.5 0.5v10M6.5 0.5v10M9.5 0.5v10" stroke="#b0b0b0" stroke-width="0.45"/><path d="M14.8 3.2 L15.4 3.8 L10.2 10.2 L9.2 9.4 Z" fill="#6d6d6d"/><path d="M9.4 9.2 L10.6 10.4 Q9.5 13.4 4.5 14.3 Q6 11.2 9.4 9.2 Z" fill="#2e75b6"/></svg><div class="t" style="left:219.10000000000002px;width:400px;text-align:center;top:44.23px;height:7.35px;line-height:7.35px;font-size:5.65px;color:#333;font-weight:400;">Format as</div><div class="t" style="left:217.5px;width:400px;text-align:center;top:51.93px;height:7.35px;line-height:7.35px;font-size:5.65px;color:#333;font-weight:400;">Table</div><svg class="b" style="left:424.4px;top:54.6px;" width="3.2" height="2.0" viewBox="0 0 3.2 2.0"><path d="M0 0 L3.2 0 L1.6 2 Z" fill="#555"/></svg><div class="b" style="left:433.0px;top:26.7px;width:110.40px;height:29.20px;background:#fff;border:0.7px solid #d0d0d0;"></div><div class="b" style="left:434.2px;top:28.4px;width:50.30px;height:12.20px;background:#fff;border:1.3px solid #8fcaa0;"></div><div class="t" style="left:437.0px;top:30.75px;height:8.71px;line-height:8.71px;font-size:6.7px;color:#222;font-weight:400;">Normal</div><div class="b" style="left:486.2px;top:28.8px;width:47.80px;height:11.40px;background:#ffc7ce;"></div><div class="t" style="left:488.5px;top:30.75px;height:8.71px;line-height:8.71px;font-size:6.7px;color:#9c0006;font-weight:400;">Bad</div><div class="b" style="left:435.0px;top:42.6px;width:48.50px;height:10.70px;background:#c6efce;"></div><div class="t" style="left:437.0px;top:43.55px;height:8.71px;line-height:8.71px;font-size:6.7px;color:#006100;font-weight:400;">Good</div><div class="b" style="left:486.2px;top:42.6px;width:47.80px;height:10.70px;background:#ffeb9c;"></div><div class="t" style="left:488.5px;top:43.55px;height:8.71px;line-height:8.71px;font-size:6.7px;color:#9c6500;font-weight:400;">Neutral</div><div class="b" style="left:536.3px;top:26.7px;width:7.10px;height:29.20px;background:#fff;border:0.7px solid #d0d0d0;"></div><div class="b" style="left:536.3px;top:36.5px;width:7.10px;height:0.70px;background:#d0d0d0;"></div><div class="b" style="left:536.3px;top:46.2px;width:7.10px;height:0.70px;background:#d0d0d0;"></div><svg class="b" style="left:538.3px;top:31px;" width="3" height="2" viewBox="0 0 3 2"><path d="M0 2 L3 2 L1.5 0 Z" fill="#bbb"/></svg><svg class="b" style="left:538.3px;top:41px;" width="3" height="2" viewBox="0 0 3 2"><path d="M0 0 L3 0 L1.5 2 Z" fill="#555"/></svg><svg class="b" style="left:538.3px;top:49.6px;" width="3" height="3.2" viewBox="0 0 3 3.2"><path d="M0 0.3 L3 0.3" stroke="#555" stroke-width="0.6"/><path d="M0 1.2 L3 1.2 L1.5 3 Z" fill="#555"/></svg><svg class="b" style="left:552.4px;top:27.5px;" width="16" height="14" viewBox="0 0 16 14"><rect x="0.5" y="0.5" width="7" height="3" fill="#fff" stroke="#888" stroke-width="0.5"/><path d="M4 0.5v3" stroke="#888" stroke-width="0.5"/><rect x="5" y="4.8" width="8" height="3" fill="#dfe9f5" stroke="#5a8ac6" stroke-width="0.5"/><path d="M1 6.3 L4 6.3 M1 6.3 L2.3 5.2 M1 6.3 L2.3 7.4" stroke="#2e75b6" stroke-width="0.6"/><rect x="0.5" y="9" width="7" height="4.5" fill="#fff" stroke="#888" stroke-width="0.5"/><path d="M4 9v4.5M0.5 11.2h7" stroke="#888" stroke-width="0.5"/></svg><div class="t" style="left:358.9px;width:400px;text-align:center;top:44.23px;height:7.35px;line-height:7.35px;font-size:5.65px;color:#333;font-weight:400;">Insert</div><svg class="b" style="left:557.3px;top:53.6px;" width="3.2" height="2.0" viewBox="0 0 3.2 2.0"><path d="M0 0 L3.2 0 L1.6 2 Z" fill="#555"/></svg><svg class="b" style="left:571.9px;top:27.5px;" width="16" height="14" viewBox="0 0 16 14"><rect x="0.5" y="0.5" width="7" height="3" fill="#fff" stroke="#888" stroke-width="0.5"/><path d="M4 0.5v3" stroke="#888" stroke-width="0.5"/><rect x="0.5" y="4.8" width="7" height="3" fill="#dfe9f5" stroke="#5a8ac6" stroke-width="0.5"/><path d="M7.5 3.5 L13.5 10 M13.5 3.5 L7.5 10" stroke="#e2582b" stroke-width="1"/><rect x="0.5" y="9" width="7" height="4.5" fill="#fff" stroke="#888" stroke-width="0.5"/><path d="M4 9v4.5M0.5 11.2h7" stroke="#888" stroke-width="0.5"/></svg><div class="t" style="left:379.0px;width:400px;text-align:center;top:44.23px;height:7.35px;line-height:7.35px;font-size:5.65px;color:#333;font-weight:400;">Delete</div><svg class="b" style="left:577.4px;top:53.6px;" width="3.2" height="2.0" viewBox="0 0 3.2 2.0"><path d="M0 0 L3.2 0 L1.6 2 Z" fill="#555"/></svg><svg class="b" style="left:592.0px;top:27.5px;" width="16" height="14" viewBox="0 0 16 14"><path d="M1 1.2 L13 1.2 M1 1.2 L2.3 0.2 M1 1.2 L2.3 2.2 M13 1.2 L11.7 0.2 M13 1.2 L11.7 2.2" stroke="#2e75b6" stroke-width="0.5"/><rect x="0.5" y="3" width="13" height="10" fill="#fff" stroke="#999" stroke-width="0.5"/><path d="M0.5 5.5h13M0.5 8h13M0.5 10.5h13M4.5 3v10M9.5 3v10" stroke="#bbb" stroke-width="0.5"/><rect x="5" y="5.5" width="4.3" height="5" fill="#2e75b6"/></svg><div class="t" style="left:399.5px;width:400px;text-align:center;top:44.23px;height:7.35px;line-height:7.35px;font-size:5.65px;color:#333;font-weight:400;">Format</div><svg class="b" style="left:597.9px;top:53.6px;" width="3.2" height="2.0" viewBox="0 0 3.2 2.0"><path d="M0 0 L3.2 0 L1.6 2 Z" fill="#555"/></svg><svg class="b" style="left:615.5px;top:27.0px;" width="8" height="7" viewBox="0 0 8 7"><path d="M7.4 1.3 L7.4 0.6 L0.8 0.6 L3.9 3.5 L0.8 6.4 L7.4 6.4 L7.4 5.7" fill="none" stroke="#3a3a3a" stroke-width="1.1" stroke-linejoin="miter"/></svg><div class="t" style="left:624.9px;top:28.33px;height:7.35px;line-height:7.35px;font-size:5.65px;color:#333;font-weight:400;">AutoSum</div><svg class="b" style="left:653.4px;top:30.6px;" width="3.2" height="2.0" viewBox="0 0 3.2 2.0"><path d="M0 0 L3.2 0 L1.6 2 Z" fill="#555"/></svg><svg class="b" style="left:615.7px;top:37.8px;" width="7.6" height="7.8" viewBox="0 0 7.6 7.8"><rect x="0.4" y="0.4" width="6.8" height="7" fill="#fff" stroke="#666" stroke-width="0.7"/><path d="M0.4 1.6h6.8" stroke="#666" stroke-width="0.7"/><path d="M3.8 2.6 L3.8 5.4" stroke="#2e75b6" stroke-width="1.1"/><path d="M2 4.3 L3.8 6.6 L5.6 4.3 Z" fill="#2e75b6"/></svg><div class="t" style="left:624.9px;top:38.53px;height:7.35px;line-height:7.35px;font-size:5.65px;color:#333;font-weight:400;">Fill</div><svg class="b" style="left:633.4px;top:41.2px;" width="3.2" height="2.0" viewBox="0 0 3.2 2.0"><path d="M0 0 L3.2 0 L1.6 2 Z" fill="#555"/></svg><svg class="b" style="left:615.8px;top:49.3px;" width="8" height="6.5" viewBox="0 0 8 6.5"><path d="M0.8 4.2 L4.6 0.8 L7.2 3.2 L3.6 6.2 L2 6.2 Z" fill="#ea7b97"/><path d="M2.2 2.8 L5 5.2" stroke="#fff" stroke-width="0.4"/><path d="M3.5 6.1 L7.5 6.1" stroke="#888" stroke-width="0.5"/></svg><div class="t" style="left:624.9px;top:49.53px;height:7.35px;line-height:7.35px;font-size:5.65px;color:#333;font-weight:400;">Clear</div><svg class="b" style="left:638.8px;top:52.4px;" width="3.2" height="2.0" viewBox="0 0 3.2 2.0"><path d="M0 0 L3.2 0 L1.6 2 Z" fill="#555"/></svg><svg class="b" style="left:661px;top:28.0px;" width="16" height="13" viewBox="0 0 16 13"><path d="M0.8 5.6 L2.9 0.6 L5 5.6 M1.6 3.9 L4.2 3.9" fill="none" stroke="#3c7fc6" stroke-width="1"/><path d="M1 7.5 L4.9 7.5 L1 12.4 L5 12.4" fill="none" stroke="#9b59b6" stroke-width="1"/><path d="M5.8 3.4 L14.5 3.4 L11 7 L11 10.4 L9.4 9.6 L9.4 7 Z" fill="#7a7a7a"/></svg><svg class="b" style="left:682.9px;top:28.3px;" width="13.2" height="11.6" viewBox="0 0 13.2 11.6"><path d="M0.3 11.3 L0.8 5 L2.6 0.4 L5.6 0.4 L5.8 11.3 Z M12.9 11.3 L12.4 5 L10.6 0.4 L7.6 0.4 L7.4 11.3 Z" fill="#6e6e6e"/><rect x="5.4" y="3" width="2.4" height="4.2" fill="#555"/></svg><div class="t" style="left:468.6px;width:400px;text-align:center;top:44.53px;height:7.35px;line-height:7.35px;font-size:5.65px;color:#333;font-weight:400;">Sort &amp;</div><div class="t" style="left:467.29999999999995px;width:400px;text-align:center;top:51.23px;height:7.35px;line-height:7.35px;font-size:5.65px;color:#333;font-weight:400;">Filter</div><svg class="b" style="left:674.0px;top:54.2px;" width="3.2" height="2.0" viewBox="0 0 3.2 2.0"><path d="M0 0 L3.2 0 L1.6 2 Z" fill="#555"/></svg><svg class="b" style="left:682.4px;top:28.2px;" width="14" height="12" viewBox="0 0 14 12"><path d="M1 11 L1 5 L3 1 L6 1 L6 11 Z M8 11 L8 1 L11 1 L13 5 L13 11 Z" fill="#777"/><rect x="5.5" y="3" width="3" height="4" fill="#666"/></svg><div class="t" style="left:489.5px;width:400px;text-align:center;top:44.53px;height:7.35px;line-height:7.35px;font-size:5.65px;color:#333;font-weight:400;">Find &amp;</div><div class="t" style="left:487.79999999999995px;width:400px;text-align:center;top:51.23px;height:7.35px;line-height:7.35px;font-size:5.65px;color:#333;font-weight:400;">Select</div><svg class="b" style="left:695.4px;top:54.2px;" width="3.2" height="2.0" viewBox="0 0 3.2 2.0"><path d="M0 0 L3.2 0 L1.6 2 Z" fill="#555"/></svg><div class="b" style="left:2.0px;top:73.5px;width:49.00px;height:12.20px;background:#fff;border:0.7px solid #c6c6c6;"></div><div class="t" style="left:5.8px;top:75.91px;height:8.19px;line-height:8.19px;font-size:6.3px;color:#333;font-weight:400;">M61</div><svg class="b" style="left:44.6px;top:78.8px;" width="3.2" height="2.0" viewBox="0 0 3.2 2.0"><path d="M0 0 L3.2 0 L1.6 2 Z" fill="#666"/></svg><div class="b" style="left:58.1px;top:76.85000000000001px;width:0.70px;height:0.70px;background:#999;"></div><div class="b" style="left:58.1px;top:79.25px;width:0.70px;height:0.70px;background:#999;"></div><div class="b" style="left:58.1px;top:81.65px;width:0.70px;height:0.70px;background:#999;"></div><div class="b" style="left:66.0px;top:73.5px;width:52.30px;height:12.20px;background:#fff;border:0.7px solid #c6c6c6;"></div><svg class="b" style="left:71px;top:76.2px;" width="8" height="7.6" viewBox="0 0 8 7.6"><path d="M0.5 0.5 L7.3 7.1 M7.3 0.5 L0.5 7.1" stroke="#b5b5b5" stroke-width="0.9"/></svg><svg class="b" style="left:88px;top:76.2px;" width="9.4" height="7.6" viewBox="0 0 9.4 7.6"><path d="M0.6 3.8 L3.4 6.8 L8.8 0.6" fill="none" stroke="#b5b5b5" stroke-width="1"/></svg><div class="t" style="left:-90.2px;width:400px;text-align:center;top:72.97px;height:13.65px;line-height:13.65px;font-size:10.5px;color:#555;font-weight:400;font-family:"Liberation Serif",serif;"><i>f<span style="font-size:8px">x</span></i></div><div class="b" style="left:120.0px;top:73.5px;width:645.70px;height:12.20px;background:#fff;border:0.7px solid #c6c6c6;"></div><svg class="b" style="left:758.8px;top:78.4px;" width="5.6" height="4.2" viewBox="0 0 5.6 4.2"><path d="M0.6 0.7 L2.8 3.3 L5 0.7" fill="none" stroke="#444" stroke-width="1.3"/></svg><div class="b" style="left:758.2px;top:90.6px;width:9.80px;height:297.40px;background:#fff;"></div><div class="b" style="left:758.2px;top:258.5px;width:8.60px;height:123.00px;background:#f2f2f2;"></div><div class="b" style="left:759.1px;top:91.4px;width:7.50px;height:7.80px;background:#fff;border:0.7px solid #d0d0d0;"></div><svg class="b" style="left:761.4px;top:94.3px;" width="3" height="2" viewBox="0 0 3 2"><path d="M0 2 L3 2 L1.5 0 Z" fill="#555"/></svg><div class="b" style="left:759.3px;top:98.6px;width:7.30px;height:160.70px;background:#fff;border:0.7px solid #d0d0d0;"></div><div class="b" style="left:759.3px;top:381.3px;width:6.90px;height:7.30px;background:#fff;border:0.7px solid #d0d0d0;"></div><svg class="b" style="left:761.2px;top:384.0px;" width="3" height="2" viewBox="0 0 3 2"><path d="M0 0 L3 0 L1.5 2 Z" fill="#666"/></svg><div class="b" style="left:0px;top:388.0px;width:768.00px;height:14.50px;background:#f4f4f4;border-top:0.6px solid #d8d8d8;"></div><svg class="b" style="left:12.5px;top:392.5px;" width="3" height="4.5" viewBox="0 0 3 4.5"><path d="M2.5 0.3 L0.6 2.25 L2.5 4.2" fill="none" stroke="#aaa" stroke-width="0.6"/></svg><svg class="b" style="left:26px;top:392.5px;" width="3" height="4.5" viewBox="0 0 3 4.5"><path d="M0.5 0.3 L2.4 2.25 L0.5 4.2" fill="none" stroke="#aaa" stroke-width="0.6"/></svg><div class="b" style="left:48.2px;top:388.0px;width:24.90px;height:13.50px;background:#fff;border-left:0.6px solid #d4d4d4;border-right:0.6px solid #d4d4d4;"></div><div class="b" style="left:48.5px;top:399.3px;width:24.30px;height:1.90px;background:#6aa882;"></div><div class="t" style="left:-139.5px;width:400px;text-align:center;top:391.80px;height:7.80px;line-height:7.80px;font-size:6.0px;color:#217346;font-weight:700;">WBS</div><div class="t" style="left:-114.4px;width:400px;text-align:center;top:391.80px;height:7.80px;line-height:7.80px;font-size:6.0px;color:#555;font-weight:400;">Data</div><div class="b" style="left:98.0px;top:390.5px;width:0.70px;height:8.50px;background:#d0d0d0;"></div><svg class="b" style="left:113.5px;top:390.1px;" width="9" height="9" viewBox="0 0 9 9"><circle cx="4.5" cy="4.5" r="3.8" fill="#fff" stroke="#888" stroke-width="0.7"/><path d="M4.5 2.5 L4.5 6.5 M2.5 4.5 L6.5 4.5" stroke="#777" stroke-width="0.8"/></svg><div class="b" style="left:461.1px;top:391.09999999999997px;width:0.60px;height:0.60px;background:#aaa;"></div><div class="b" style="left:461.1px;top:393.7px;width:0.60px;height:0.60px;background:#aaa;"></div><div class="b" style="left:461.1px;top:396.3px;width:0.60px;height:0.60px;background:#aaa;"></div><div class="b" style="left:468.9px;top:391.8px;width:288.80px;height:7.00px;background:#e8e8e8;"></div><div class="b" style="left:468.9px;top:391.8px;width:7.20px;height:7.00px;background:#fff;border:0.6px solid #c6c6c6;"></div><svg class="b" style="left:471.2px;top:393.8px;" width="2" height="3" viewBox="0 0 2 3"><path d="M2 0 L2 3 L0 1.5 Z" fill="#555"/></svg><div class="b" style="left:476.1px;top:391.8px;width:258.20px;height:7.00px;background:#fff;border:0.6px solid #c6c6c6;"></div><div class="b" style="left:750.2px;top:391.8px;width:7.50px;height:7.00px;background:#fff;border:0.6px solid #c6c6c6;"></div><svg class="b" style="left:753.0px;top:393.8px;" width="2" height="3" viewBox="0 0 2 3"><path d="M0 0 L0 3 L2 1.5 Z" fill="#555"/></svg><div class="b" style="left:0px;top:401.5px;width:768.00px;height:11.50px;background:#217346;"></div><div class="b" style="left:0px;top:411.8px;width:23.00px;height:1.20px;background:#15412a;"></div><div class="b" style="left:23px;top:411.8px;width:745.00px;height:1.20px;background:#33493b;"></div><div class="t" style="left:3.0px;top:403.75px;height:6.50px;line-height:6.50px;font-size:5.0px;color:#fff;font-weight:400;">READY</div><svg class="b" style="left:28.6px;top:403.6px;" width="7" height="7" viewBox="0 0 7 7"><rect x="0.4" y="0.8" width="6.2" height="5.8" fill="none" stroke="#fff" stroke-width="0.6"/><path d="M0.4 3h6.2M0.4 4.8h6.2M3 3v3.6" stroke="#fff" stroke-width="0.5"/><circle cx="1.6" cy="1.6" r="1.3" fill="#fff"/></svg><div class="b" style="left:628.5px;top:401.5px;width:16.20px;height:10.50px;background:#1a5c38;"></div><svg class="b" style="left:632.8px;top:404.0px;" width="7.6" height="6.2" viewBox="0 0 7.6 6.2"><rect x="0.3" y="0.3" width="7" height="5.6" fill="none" stroke="#fff" stroke-width="0.6"/><rect x="1.2" y="0.6" width="1.3" height="5" fill="#e9f2ec"/><rect x="3.2" y="0.6" width="1.3" height="5" fill="#e9f2ec"/><rect x="5.2" y="0.6" width="1.3" height="5" fill="#e9f2ec"/></svg><svg class="b" style="left:651.6px;top:404.0px;" width="7.2" height="6.2" viewBox="0 0 7.2 6.2"><rect x="0.3" y="0.3" width="6.6" height="5.6" fill="none" stroke="#cfe3d6" stroke-width="0.6"/><rect x="1.8" y="0.6" width="3.6" height="5" fill="none" stroke="#cfe3d6" stroke-width="0.5"/></svg><svg class="b" style="left:669.6px;top:404.0px;" width="7.2" height="6.2" viewBox="0 0 7.2 6.2"><rect x="0.3" y="0.3" width="6.6" height="5.6" fill="none" stroke="#fff" stroke-width="0.6"/><rect x="0.8" y="0.8" width="3" height="2.4" fill="#fff"/></svg><div class="b" style="left:685.5px;top:406.7px;width:3.00px;height:0.70px;background:#fff;"></div><div class="b" style="left:690.3px;top:406.6px;width:47.20px;height:1.00px;background:#7fb592;"></div><div class="b" style="left:713.0px;top:404.2px;width:1.90px;height:5.80px;background:#fff;"></div><div class="b" style="left:739.8px;top:406.7px;width:3.40px;height:0.70px;background:#fff;"></div><div class="b" style="left:741.15px;top:405.3px;width:0.70px;height:3.50px;background:#fff;"></div><div class="t" style="left:751.8px;top:403.43px;height:7.15px;line-height:7.15px;font-size:5.5px;color:#fff;font-weight:400;transform:scaleX(0.86);transform-origin:0 50%;">100%</div>
</body></html>
